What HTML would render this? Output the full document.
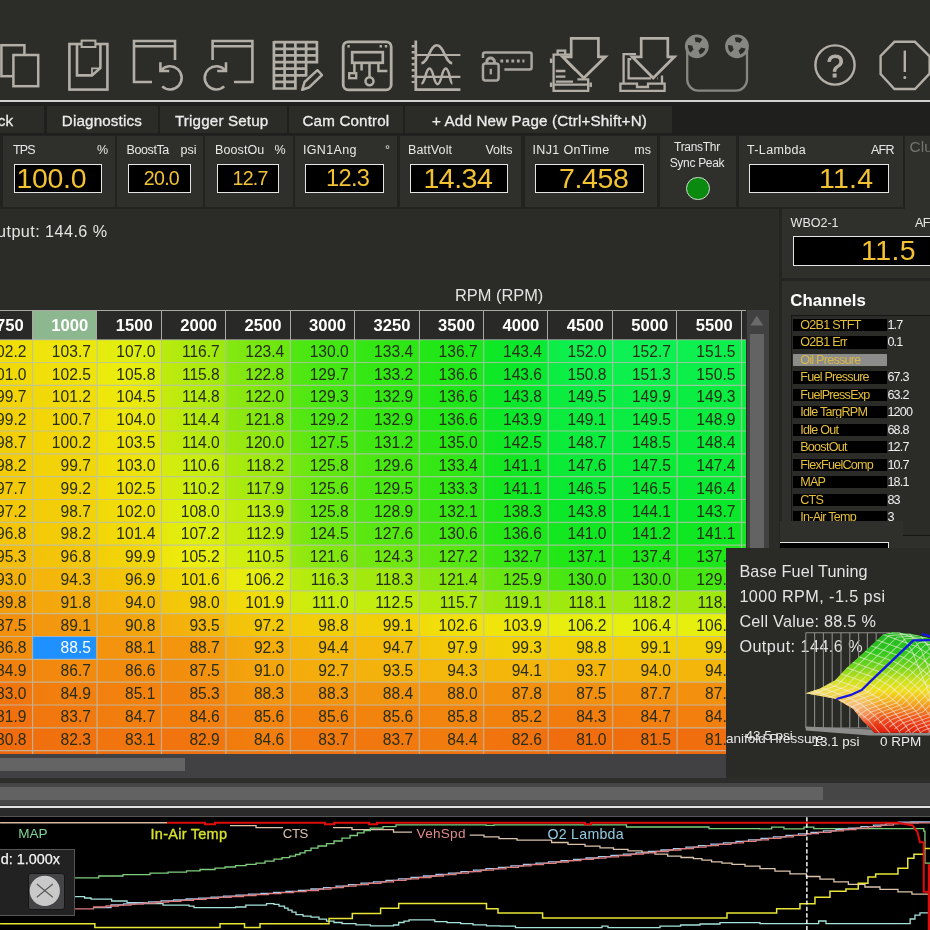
<!DOCTYPE html><html><head><meta charset="utf-8"><title>ECU Tuning</title><style>

html,body{margin:0;padding:0;background:#2b2b27;}
body{width:930px;height:930px;overflow:hidden;position:relative;font-family:"Liberation Sans", sans-serif;color:#e6e6e6;}
#root{position:absolute;left:0;top:0;width:930px;height:930px;overflow:hidden;background:#2b2b27;filter:blur(.4px);}
#root div,#root svg,#root span{position:absolute;box-sizing:border-box;white-space:nowrap;}
.tab{background:#2b2b27;font-size:15.2px;line-height:27px;color:#ececec;letter-spacing:.15px;-webkit-text-stroke:.3px #ececec;}
.gp{background:#2f2f2b;}
.gl{font-size:12.5px;color:#e8e8e8;line-height:14px;}
.gb{background:#000;border:1.5px solid #e4e4e4;}
.gv{color:#f2c233;text-align:right;}
.th{background:#292927;color:#fff;font-weight:bold;font-size:16.6px;text-align:right;padding-right:9.6px;border-left:1.5px solid #a9a9a3;line-height:30.4px;}
.td{color:#272d16;font-size:15.6px;text-align:right;padding-right:6.4px;line-height:24.6px;}
.cl{background:#000;color:#e6bf3c;font-size:12.6px;line-height:12px;letter-spacing:-.75px;padding-left:7px;overflow:hidden;}
.cv{color:#f0f0f0;font-size:12.6px;line-height:12px;letter-spacing:-.8px;}
.tt{font-size:16.2px;color:#e4e4e4;line-height:20px;}
.lg{font-size:13.6px;line-height:14px;}

</style></head><body><div id="root">
<div style="left:0.0px;top:0.0px;width:930.0px;height:100.2px;background:#2c2c28;"></div>
<div style="left:0.0px;top:100.3px;width:930.0px;height:1.9px;background:#d2d2d2;"></div>
<div style="left:0.0px;top:102.4px;width:930.0px;height:33.0px;background:#1f1f1d;"></div>
<div class="tab" style="left:-10.0px;top:105.8px;width:53.9px;height:27.4px;overflow:hidden;"><span style="right:30.6px;top:1.4px;">Knock</span></div>
<div class="tab" style="left:46.5px;top:105.8px;width:111.5px;height:27.4px;padding-left:15.3px;padding-top:1.4px;">Diagnostics</div>
<div class="tab" style="left:160.0px;top:105.8px;width:126.5px;height:27.4px;padding-left:15px;padding-top:1.4px;">Trigger Setup</div>
<div class="tab" style="left:288.5px;top:105.8px;width:114.1px;height:27.4px;padding-left:14px;padding-top:1.4px;">Cam Control</div>
<div class="tab" style="left:405.0px;top:105.8px;width:267.0px;height:27.4px;padding-left:27px;padding-top:1.4px;">+ Add New Page (Ctrl+Shift+N)</div>
<div style="left:0.0px;top:135.4px;width:930.0px;height:74.0px;background:#222220;"></div>
<div class="gp" style="left:2.6px;top:136.4px;width:112.4px;height:70.4px;"></div>
<div class="gl" style="left:13.0px;top:143.3px;width:90.0px;height:14.0px;letter-spacing:-0.9px;">TPS</div>
<div class="gl" style="left:48.0px;top:143.3px;width:60.0px;height:14.0px;text-align:right;letter-spacing:0px;">%</div>
<div class="gb" style="left:14.2px;top:163.6px;width:87.4px;height:29.6px;"><div class="gv" style="left:0;top:0;right:14.3px;bottom:0;font-size:28.5px;letter-spacing:-0.3px;line-height:26.6px;">100.0</div></div>
<div class="gp" style="left:117.4px;top:136.4px;width:85.6px;height:70.4px;"></div>
<div class="gl" style="left:126.5px;top:143.3px;width:90.0px;height:14.0px;letter-spacing:-0.4px;width:43.6px;overflow:hidden;">BoostTa</div>
<div class="gl" style="left:136.5px;top:143.3px;width:60.0px;height:14.0px;text-align:right;letter-spacing:0px;">psi</div>
<div class="gb" style="left:128.0px;top:163.6px;width:63.2px;height:29.6px;"><div class="gv" style="left:0;top:0;right:11.2px;bottom:0;font-size:19.6px;letter-spacing:-0.75px;line-height:26.6px;">20.0</div></div>
<div class="gp" style="left:205.0px;top:136.4px;width:88.0px;height:70.4px;"></div>
<div class="gl" style="left:215.0px;top:143.3px;width:90.0px;height:14.0px;letter-spacing:0.1px;">BoostOu</div>
<div class="gl" style="left:225.5px;top:143.3px;width:60.0px;height:14.0px;text-align:right;letter-spacing:0px;">%</div>
<div class="gb" style="left:216.8px;top:163.6px;width:62.1px;height:29.6px;"><div class="gv" style="left:0;top:0;right:10.2px;bottom:0;font-size:19.6px;letter-spacing:-0.75px;line-height:26.6px;">12.7</div></div>
<div class="gp" style="left:295.0px;top:136.4px;width:102.4px;height:70.4px;"></div>
<div class="gl" style="left:303.0px;top:143.3px;width:90.0px;height:14.0px;letter-spacing:0.33px;">IGN1Ang</div>
<div class="gl" style="left:330.0px;top:143.3px;width:60.0px;height:14.0px;text-align:right;letter-spacing:0px;">°</div>
<div class="gb" style="left:305.3px;top:163.6px;width:78.6px;height:29.6px;"><div class="gv" style="left:0;top:0;right:13.7px;bottom:0;font-size:23.6px;letter-spacing:-0.7px;line-height:26.6px;">12.3</div></div>
<div class="gp" style="left:399.6px;top:136.4px;width:121.9px;height:70.4px;"></div>
<div class="gl" style="left:408.0px;top:143.3px;width:90.0px;height:14.0px;letter-spacing:0.14px;">BattVolt</div>
<div class="gl" style="left:452.5px;top:143.3px;width:60.0px;height:14.0px;text-align:right;letter-spacing:0px;">Volts</div>
<div class="gb" style="left:409.6px;top:163.6px;width:98.6px;height:29.6px;"><div class="gv" style="left:0;top:0;right:14.9px;bottom:0;font-size:28.5px;letter-spacing:-0.5px;line-height:26.6px;">14.34</div></div>
<div class="gp" style="left:524.6px;top:136.4px;width:132.6px;height:70.4px;"></div>
<div class="gl" style="left:532.5px;top:143.3px;width:90.0px;height:14.0px;letter-spacing:0.35px;">INJ1 OnTime</div>
<div class="gl" style="left:591.0px;top:143.3px;width:60.0px;height:14.0px;text-align:right;letter-spacing:0px;">ms</div>
<div class="gb" style="left:534.7px;top:163.6px;width:108.9px;height:29.6px;"><div class="gv" style="left:0;top:0;right:14.2px;bottom:0;font-size:28.5px;letter-spacing:-0.4px;line-height:26.6px;">7.458</div></div>
<div class="gp" style="left:660.0px;top:136.4px;width:76.0px;height:70.4px;"></div>
<div class="gl" style="left:659.0px;top:140.3px;width:76.0px;height:14.0px;text-align:center;font-size:12px;letter-spacing:-.3px;">TransThr</div>
<div class="gl" style="left:659.0px;top:156.2px;width:76.0px;height:14.0px;text-align:center;font-size:12px;letter-spacing:-.3px;">Sync Peak</div>
<div style="left:686.2px;top:176.6px;width:23.6px;height:23.6px;border-radius:50%;background:#0b8a10;border:1.9px solid #d2dcd2;"></div>
<div class="gp" style="left:739.4px;top:136.4px;width:164.0px;height:70.4px;"></div>
<div class="gl" style="left:747.0px;top:143.3px;width:90.0px;height:14.0px;letter-spacing:0.36px;">T-Lambda</div>
<div class="gl" style="left:834.5px;top:143.3px;width:59.2px;height:14.0px;text-align:right;letter-spacing:-0.8px;">AFR</div>
<div class="gb" style="left:749.0px;top:163.6px;width:140.2px;height:29.6px;"><div class="gv" style="left:0;top:0;right:14.7px;bottom:0;font-size:28.5px;letter-spacing:0.3px;line-height:26.6px;">11.4</div></div>
<div style="left:905.4px;top:136.4px;width:30.0px;height:77.6px;background:#2f2f2b;"></div>
<div style="left:909.5px;top:137.4px;width:30.0px;height:20.0px;font-size:15.5px;color:#74746f;line-height:20px;">Clutch</div>
<div style="left:0.0px;top:209.0px;width:780.0px;height:110.0px;background:#2b2b27;"></div>
<div style="left:-16.0px;top:221.3px;width:200.0px;height:20.0px;font-size:16.2px;color:#e4e4e4;line-height:20px;letter-spacing:.44px;">Output: 144.6 %</div>
<div style="left:455.0px;top:285.0px;width:100.0px;height:20.0px;font-size:16.4px;color:#e4e4e4;line-height:20px;">RPM (RPM)</div>
<div style="left:779.2px;top:209.0px;width:151.0px;height:350.0px;background:#242422;"></div>
<div style="left:781.6px;top:209.0px;width:149.0px;height:68.8px;background:#2f2f2b;"></div>
<div class="gl" style="left:790.6px;top:216.2px;width:80.0px;height:14.0px;">WBO2-1</div>
<div class="gl" style="left:915.0px;top:216.2px;width:40.0px;height:14.0px;letter-spacing:-.6px;">AFR</div>
<div class="gb" style="left:792.7px;top:236.0px;width:150.0px;height:29.8px;"><div class="gv" style="left:0;top:0;width:122.4px;bottom:0;font-size:28.5px;letter-spacing:.4px;line-height:26.8px;">11.5</div></div>
<div style="left:781.6px;top:280.6px;width:149.0px;height:280.0px;background:#2f2f2b;"></div>
<div style="left:790.3px;top:290.7px;width:100.0px;height:20.0px;font-size:16.8px;font-weight:bold;color:#fff;line-height:20px;">Channels</div>
<div style="left:790.6px;top:315.3px;width:145.0px;height:221.0px;border:1.2px solid #161614;background:#2b2b28;"></div>
<div class="cl" style="left:793.2px;top:319.0px;width:94.0px;height:12.2px;">O2B1 STFT</div>
<div class="cv" style="left:887.4px;top:319.0px;width:40.0px;height:12.2px;">1.7</div>
<div class="cl" style="left:793.2px;top:336.4px;width:94.0px;height:12.2px;">O2B1 Err</div>
<div class="cv" style="left:887.4px;top:336.4px;width:40.0px;height:12.2px;">0.1</div>
<div class="cl" style="left:793.2px;top:353.9px;width:94.0px;height:12.2px;background:#8c8c8a;color:#d8b848;">Oil Pressure</div>
<div class="cl" style="left:793.2px;top:371.4px;width:94.0px;height:12.2px;">Fuel Pressure</div>
<div class="cv" style="left:887.4px;top:371.4px;width:40.0px;height:12.2px;">67.3</div>
<div class="cl" style="left:793.2px;top:388.8px;width:94.0px;height:12.2px;">FuelPressExp</div>
<div class="cv" style="left:887.4px;top:388.8px;width:40.0px;height:12.2px;">63.2</div>
<div class="cl" style="left:793.2px;top:406.2px;width:94.0px;height:12.2px;">Idle TargRPM</div>
<div class="cv" style="left:887.4px;top:406.2px;width:40.0px;height:12.2px;">1200</div>
<div class="cl" style="left:793.2px;top:423.7px;width:94.0px;height:12.2px;">Idle Out</div>
<div class="cv" style="left:887.4px;top:423.7px;width:40.0px;height:12.2px;">68.8</div>
<div class="cl" style="left:793.2px;top:441.1px;width:94.0px;height:12.2px;">BoostOut</div>
<div class="cv" style="left:887.4px;top:441.1px;width:40.0px;height:12.2px;">12.7</div>
<div class="cl" style="left:793.2px;top:458.6px;width:94.0px;height:12.2px;">FlexFuelComp</div>
<div class="cv" style="left:887.4px;top:458.6px;width:40.0px;height:12.2px;">10.7</div>
<div class="cl" style="left:793.2px;top:476.0px;width:94.0px;height:12.2px;">MAP</div>
<div class="cv" style="left:887.4px;top:476.0px;width:40.0px;height:12.2px;">18.1</div>
<div class="cl" style="left:793.2px;top:493.5px;width:94.0px;height:12.2px;">CTS</div>
<div class="cv" style="left:887.4px;top:493.5px;width:40.0px;height:12.2px;">83</div>
<div class="cl" style="left:793.2px;top:510.9px;width:94.0px;height:12.2px;">In-Air Temp</div>
<div class="cv" style="left:887.4px;top:510.9px;width:40.0px;height:12.2px;">3</div>
<div style="left:0;top:310.0px;width:745.8px;height:443.8px;overflow:hidden;background:#2a2a28;">
<div class="th" style="left:-32.60px;top:0;width:65.95px;height:29.7px;border-top:1.5px solid #a9a9a3;">750</div>
<div class="th" style="left:31.85px;top:0;width:65.95px;height:29.7px;border-top:1.5px solid #a9a9a3;background:#8db88f;">1000</div>
<div class="th" style="left:96.30px;top:0;width:65.95px;height:29.7px;border-top:1.5px solid #a9a9a3;">1500</div>
<div class="th" style="left:160.75px;top:0;width:65.95px;height:29.7px;border-top:1.5px solid #a9a9a3;">2000</div>
<div class="th" style="left:225.20px;top:0;width:65.95px;height:29.7px;border-top:1.5px solid #a9a9a3;">2500</div>
<div class="th" style="left:289.65px;top:0;width:65.95px;height:29.7px;border-top:1.5px solid #a9a9a3;">3000</div>
<div class="th" style="left:354.10px;top:0;width:65.95px;height:29.7px;border-top:1.5px solid #a9a9a3;">3250</div>
<div class="th" style="left:418.55px;top:0;width:65.95px;height:29.7px;border-top:1.5px solid #a9a9a3;">3500</div>
<div class="th" style="left:483.00px;top:0;width:65.95px;height:29.7px;border-top:1.5px solid #a9a9a3;">4000</div>
<div class="th" style="left:547.45px;top:0;width:65.95px;height:29.7px;border-top:1.5px solid #a9a9a3;">4500</div>
<div class="th" style="left:611.90px;top:0;width:65.95px;height:29.7px;border-top:1.5px solid #a9a9a3;">5000</div>
<div class="th" style="left:676.35px;top:0;width:65.95px;height:29.7px;border-top:1.5px solid #a9a9a3;">5500</div>
<div class="th" style="left:740.80px;top:0;width:65.95px;height:29.7px;border-top:1.5px solid #a9a9a3;">6000</div>
<div class="td" style="left:-32.60px;top:29.70px;width:65.45px;height:23.33px;background:linear-gradient(90deg,rgb(241,222,9) 0%,rgb(241,222,9) 50%,rgb(240,224,10) 100%);">102.2</div>
<div class="td" style="left:31.85px;top:29.70px;width:65.45px;height:23.33px;background:linear-gradient(90deg,rgb(239,227,11) 0%,rgb(239,229,11) 50%,rgb(235,232,12) 100%);">103.7</div>
<div class="td" style="left:96.30px;top:29.70px;width:65.45px;height:23.33px;background:linear-gradient(90deg,rgb(229,236,13) 0%,rgb(225,239,14) 50%,rgb(209,238,14) 100%);">107.0</div>
<div class="td" style="left:160.75px;top:29.70px;width:65.45px;height:23.33px;background:linear-gradient(90deg,rgb(187,235,14) 0%,rgb(170,234,14) 50%,rgb(155,233,15) 100%);">116.7</div>
<div class="td" style="left:225.20px;top:29.70px;width:65.45px;height:23.33px;background:linear-gradient(90deg,rgb(134,232,16) 0%,rgb(119,231,16) 50%,rgb(104,231,17) 100%);">123.4</div>
<div class="td" style="left:289.65px;top:29.70px;width:65.45px;height:23.33px;background:linear-gradient(90deg,rgb(83,231,18) 0%,rgb(68,231,19) 50%,rgb(62,231,19) 100%);">130.0</div>
<div class="td" style="left:354.10px;top:29.70px;width:65.45px;height:23.33px;background:linear-gradient(90deg,rgb(54,231,20) 0%,rgb(48,231,20) 50%,rgb(43,231,21) 100%);">133.4</div>
<div class="td" style="left:418.55px;top:29.70px;width:65.45px;height:23.33px;background:linear-gradient(90deg,rgb(36,231,22) 0%,rgb(31,231,23) 50%,rgb(25,231,28) 100%);">136.7</div>
<div class="td" style="left:483.00px;top:29.70px;width:65.45px;height:23.33px;background:linear-gradient(90deg,rgb(17,232,36) 0%,rgb(10,232,42) 50%,rgb(11,234,53) 100%);">143.4</div>
<div class="td" style="left:547.45px;top:29.70px;width:65.45px;height:23.33px;background:linear-gradient(90deg,rgb(12,237,69) 0%,rgb(13,240,80) 50%,rgb(13,240,82) 100%);">152.0</div>
<div class="td" style="left:611.90px;top:29.70px;width:65.45px;height:23.33px;background:linear-gradient(90deg,rgb(14,240,83) 0%,rgb(14,241,84) 50%,rgb(13,240,82) 100%);">152.7</div>
<div class="td" style="left:676.35px;top:29.70px;width:65.45px;height:23.33px;background:linear-gradient(90deg,rgb(13,240,80) 0%,rgb(13,239,78) 50%,rgb(13,239,77) 100%);">151.5</div>
<div class="td" style="left:740.80px;top:29.70px;width:65.45px;height:23.33px;background:linear-gradient(90deg,rgb(12,239,75) 0%,rgb(12,238,74) 50%,rgb(12,238,74) 100%);">150.9</div>
<div class="td" style="left:-32.60px;top:52.53px;width:65.45px;height:23.33px;background:linear-gradient(90deg,rgb(241,217,9) 0%,rgb(241,217,9) 50%,rgb(241,219,9) 100%);">101.0</div>
<div class="td" style="left:31.85px;top:52.53px;width:65.45px;height:23.33px;background:linear-gradient(90deg,rgb(241,222,9) 0%,rgb(240,224,10) 50%,rgb(238,228,11) 100%);">102.5</div>
<div class="td" style="left:96.30px;top:52.53px;width:65.45px;height:23.33px;background:linear-gradient(90deg,rgb(236,234,13) 0%,rgb(234,238,14) 50%,rgb(216,237,14) 100%);">105.8</div>
<div class="td" style="left:160.75px;top:52.53px;width:65.45px;height:23.33px;background:linear-gradient(90deg,rgb(193,235,14) 0%,rgb(176,234,14) 50%,rgb(160,233,15) 100%);">115.8</div>
<div class="td" style="left:225.20px;top:52.53px;width:65.45px;height:23.33px;background:linear-gradient(90deg,rgb(139,232,16) 0%,rgb(124,231,16) 50%,rgb(108,231,17) 100%);">122.8</div>
<div class="td" style="left:289.65px;top:52.53px;width:65.45px;height:23.33px;background:linear-gradient(90deg,rgb(86,231,18) 0%,rgb(70,231,19) 50%,rgb(64,231,19) 100%);">129.7</div>
<div class="td" style="left:354.10px;top:52.53px;width:65.45px;height:23.33px;background:linear-gradient(90deg,rgb(55,231,20) 0%,rgb(49,231,20) 50%,rgb(44,231,21) 100%);">133.2</div>
<div class="td" style="left:418.55px;top:52.53px;width:65.45px;height:23.33px;background:linear-gradient(90deg,rgb(37,231,22) 0%,rgb(32,231,23) 50%,rgb(25,231,29) 100%);">136.6</div>
<div class="td" style="left:483.00px;top:52.53px;width:65.45px;height:23.33px;background:linear-gradient(90deg,rgb(17,232,36) 0%,rgb(10,232,42) 50%,rgb(11,234,52) 100%);">143.6</div>
<div class="td" style="left:547.45px;top:52.53px;width:65.45px;height:23.33px;background:linear-gradient(90deg,rgb(12,236,64) 0%,rgb(12,238,74) 50%,rgb(12,239,75) 100%);">150.8</div>
<div class="td" style="left:611.90px;top:52.53px;width:65.45px;height:23.33px;background:linear-gradient(90deg,rgb(13,239,76) 0%,rgb(13,239,76) 50%,rgb(12,239,75) 100%);">151.3</div>
<div class="td" style="left:676.35px;top:52.53px;width:65.45px;height:23.33px;background:linear-gradient(90deg,rgb(12,238,73) 0%,rgb(12,238,72) 50%,rgb(12,238,71) 100%);">150.5</div>
<div class="td" style="left:740.80px;top:52.53px;width:65.45px;height:23.33px;background:linear-gradient(90deg,rgb(12,238,70) 0%,rgb(12,237,69) 50%,rgb(12,237,69) 100%);">150.0</div>
<div class="td" style="left:-32.60px;top:75.36px;width:65.45px;height:23.33px;background:linear-gradient(90deg,rgb(242,211,8) 0%,rgb(242,211,8) 50%,rgb(242,213,8) 100%);">99.7</div>
<div class="td" style="left:31.85px;top:75.36px;width:65.45px;height:23.33px;background:linear-gradient(90deg,rgb(241,216,9) 0%,rgb(241,218,9) 50%,rgb(240,222,10) 100%);">101.2</div>
<div class="td" style="left:96.30px;top:75.36px;width:65.45px;height:23.33px;background:linear-gradient(90deg,rgb(239,229,11) 0%,rgb(238,233,12) 50%,rgb(221,234,13) 100%);">104.5</div>
<div class="td" style="left:160.75px;top:75.36px;width:65.45px;height:23.33px;background:linear-gradient(90deg,rgb(199,234,14) 0%,rgb(182,235,14) 50%,rgb(166,234,15) 100%);">114.8</div>
<div class="td" style="left:225.20px;top:75.36px;width:65.45px;height:23.33px;background:linear-gradient(90deg,rgb(146,232,15) 0%,rgb(130,231,16) 50%,rgb(113,231,17) 100%);">122.0</div>
<div class="td" style="left:289.65px;top:75.36px;width:65.45px;height:23.33px;background:linear-gradient(90deg,rgb(90,231,18) 0%,rgb(73,231,19) 50%,rgb(66,231,19) 100%);">129.3</div>
<div class="td" style="left:354.10px;top:75.36px;width:65.45px;height:23.33px;background:linear-gradient(90deg,rgb(57,231,19) 0%,rgb(51,231,20) 50%,rgb(45,231,21) 100%);">132.9</div>
<div class="td" style="left:418.55px;top:75.36px;width:65.45px;height:23.33px;background:linear-gradient(90deg,rgb(38,231,22) 0%,rgb(32,231,23) 50%,rgb(25,231,29) 100%);">136.6</div>
<div class="td" style="left:483.00px;top:75.36px;width:65.45px;height:23.33px;background:linear-gradient(90deg,rgb(17,232,37) 0%,rgb(10,232,43) 50%,rgb(10,234,50) 100%);">143.8</div>
<div class="td" style="left:547.45px;top:75.36px;width:65.45px;height:23.33px;background:linear-gradient(90deg,rgb(11,235,59) 0%,rgb(11,237,66) 50%,rgb(11,237,67) 100%);">149.5</div>
<div class="td" style="left:611.90px;top:75.36px;width:65.45px;height:23.33px;background:linear-gradient(90deg,rgb(11,237,68) 0%,rgb(12,237,69) 50%,rgb(11,237,68) 100%);">149.9</div>
<div class="td" style="left:676.35px;top:75.36px;width:65.45px;height:23.33px;background:linear-gradient(90deg,rgb(11,237,66) 0%,rgb(11,237,65) 50%,rgb(11,236,65) 100%);">149.3</div>
<div class="td" style="left:740.80px;top:75.36px;width:65.45px;height:23.33px;background:linear-gradient(90deg,rgb(11,236,64) 0%,rgb(11,236,64) 50%,rgb(11,236,64) 100%);">149.0</div>
<div class="td" style="left:-32.60px;top:98.19px;width:65.45px;height:23.33px;background:linear-gradient(90deg,rgb(242,208,9) 0%,rgb(242,208,9) 50%,rgb(242,210,9) 100%);">99.2</div>
<div class="td" style="left:31.85px;top:98.19px;width:65.45px;height:23.33px;background:linear-gradient(90deg,rgb(242,213,8) 0%,rgb(242,215,8) 50%,rgb(241,220,9) 100%);">100.7</div>
<div class="td" style="left:96.30px;top:98.19px;width:65.45px;height:23.33px;background:linear-gradient(90deg,rgb(239,226,11) 0%,rgb(238,231,12) 50%,rgb(222,232,12) 100%);">104.0</div>
<div class="td" style="left:160.75px;top:98.19px;width:65.45px;height:23.33px;background:linear-gradient(90deg,rgb(201,234,13) 0%,rgb(184,235,14) 50%,rgb(169,234,15) 100%);">114.4</div>
<div class="td" style="left:225.20px;top:98.19px;width:65.45px;height:23.33px;background:linear-gradient(90deg,rgb(147,232,15) 0%,rgb(132,231,16) 50%,rgb(114,231,17) 100%);">121.8</div>
<div class="td" style="left:289.65px;top:98.19px;width:65.45px;height:23.33px;background:linear-gradient(90deg,rgb(91,231,18) 0%,rgb(74,231,19) 50%,rgb(67,231,19) 100%);">129.2</div>
<div class="td" style="left:354.10px;top:98.19px;width:65.45px;height:23.33px;background:linear-gradient(90deg,rgb(58,231,19) 0%,rgb(51,231,20) 50%,rgb(45,231,21) 100%);">132.9</div>
<div class="td" style="left:418.55px;top:98.19px;width:65.45px;height:23.33px;background:linear-gradient(90deg,rgb(38,231,22) 0%,rgb(32,231,23) 50%,rgb(25,231,29) 100%);">136.6</div>
<div class="td" style="left:483.00px;top:98.19px;width:65.45px;height:23.33px;background:linear-gradient(90deg,rgb(17,232,37) 0%,rgb(10,232,43) 50%,rgb(10,233,50) 100%);">143.9</div>
<div class="td" style="left:547.45px;top:98.19px;width:65.45px;height:23.33px;background:linear-gradient(90deg,rgb(11,235,58) 0%,rgb(11,236,64) 50%,rgb(11,236,65) 100%);">149.1</div>
<div class="td" style="left:611.90px;top:98.19px;width:65.45px;height:23.33px;background:linear-gradient(90deg,rgb(11,237,66) 0%,rgb(11,237,66) 50%,rgb(11,237,65) 100%);">149.5</div>
<div class="td" style="left:676.35px;top:98.19px;width:65.45px;height:23.33px;background:linear-gradient(90deg,rgb(11,236,64) 0%,rgb(11,236,63) 50%,rgb(11,236,63) 100%);">148.9</div>
<div class="td" style="left:740.80px;top:98.19px;width:65.45px;height:23.33px;background:linear-gradient(90deg,rgb(11,236,62) 0%,rgb(10,236,61) 50%,rgb(10,236,61) 100%);">148.6</div>
<div class="td" style="left:-32.60px;top:121.02px;width:65.45px;height:23.33px;background:linear-gradient(90deg,rgb(242,206,9) 0%,rgb(242,206,9) 50%,rgb(242,208,9) 100%);">98.7</div>
<div class="td" style="left:31.85px;top:121.02px;width:65.45px;height:23.33px;background:linear-gradient(90deg,rgb(242,211,8) 0%,rgb(242,213,8) 50%,rgb(241,218,9) 100%);">100.2</div>
<div class="td" style="left:96.30px;top:121.02px;width:65.45px;height:23.33px;background:linear-gradient(90deg,rgb(240,224,10) 0%,rgb(239,228,11) 50%,rgb(223,231,12) 100%);">103.5</div>
<div class="td" style="left:160.75px;top:121.02px;width:65.45px;height:23.33px;background:linear-gradient(90deg,rgb(202,233,13) 0%,rgb(186,235,14) 50%,rgb(174,234,14) 100%);">114.0</div>
<div class="td" style="left:225.20px;top:121.02px;width:65.45px;height:23.33px;background:linear-gradient(90deg,rgb(158,233,15) 0%,rgb(146,232,15) 50%,rgb(128,232,16) 100%);">120.0</div>
<div class="td" style="left:289.65px;top:121.02px;width:65.45px;height:23.33px;background:linear-gradient(90deg,rgb(105,231,17) 0%,rgb(87,231,18) 50%,rgb(79,231,18) 100%);">127.5</div>
<div class="td" style="left:354.10px;top:121.02px;width:65.45px;height:23.33px;background:linear-gradient(90deg,rgb(69,231,19) 0%,rgb(61,231,19) 50%,rgb(54,231,20) 100%);">131.2</div>
<div class="td" style="left:418.55px;top:121.02px;width:65.45px;height:23.33px;background:linear-gradient(90deg,rgb(46,231,21) 0%,rgb(40,231,21) 50%,rgb(31,231,26) 100%);">135.0</div>
<div class="td" style="left:483.00px;top:121.02px;width:65.45px;height:23.33px;background:linear-gradient(90deg,rgb(21,232,33) 0%,rgb(12,232,39) 50%,rgb(12,233,46) 100%);">142.5</div>
<div class="td" style="left:547.45px;top:121.02px;width:65.45px;height:23.33px;background:linear-gradient(90deg,rgb(11,235,55) 0%,rgb(11,236,62) 50%,rgb(11,236,62) 100%);">148.7</div>
<div class="td" style="left:611.90px;top:121.02px;width:65.45px;height:23.33px;background:linear-gradient(90deg,rgb(10,236,61) 0%,rgb(10,236,61) 50%,rgb(10,236,61) 100%);">148.5</div>
<div class="td" style="left:676.35px;top:121.02px;width:65.45px;height:23.33px;background:linear-gradient(90deg,rgb(10,236,60) 0%,rgb(10,235,60) 50%,rgb(10,235,60) 100%);">148.4</div>
<div class="td" style="left:740.80px;top:121.02px;width:65.45px;height:23.33px;background:linear-gradient(90deg,rgb(10,235,59) 0%,rgb(10,235,59) 50%,rgb(10,235,59) 100%);">148.2</div>
<div class="td" style="left:-32.60px;top:143.85px;width:65.45px;height:23.33px;background:linear-gradient(90deg,rgb(243,204,9) 0%,rgb(243,204,9) 50%,rgb(242,206,9) 100%);">98.2</div>
<div class="td" style="left:31.85px;top:143.85px;width:65.45px;height:23.33px;background:linear-gradient(90deg,rgb(242,209,8) 0%,rgb(242,211,8) 50%,rgb(241,215,9) 100%);">99.7</div>
<div class="td" style="left:96.30px;top:143.85px;width:65.45px;height:23.33px;background:linear-gradient(90deg,rgb(241,221,9) 0%,rgb(240,226,10) 50%,rgb(229,230,11) 100%);">103.0</div>
<div class="td" style="left:160.75px;top:143.85px;width:65.45px;height:23.33px;background:linear-gradient(90deg,rgb(214,235,13) 0%,rgb(202,238,14) 50%,rgb(190,237,14) 100%);">110.6</div>
<div class="td" style="left:225.20px;top:143.85px;width:65.45px;height:23.33px;background:linear-gradient(90deg,rgb(173,235,14) 0%,rgb(160,233,14) 50%,rgb(142,232,15) 100%);">118.2</div>
<div class="td" style="left:289.65px;top:143.85px;width:65.45px;height:23.33px;background:linear-gradient(90deg,rgb(118,232,16) 0%,rgb(100,231,17) 50%,rgb(91,231,18) 100%);">125.8</div>
<div class="td" style="left:354.10px;top:143.85px;width:65.45px;height:23.33px;background:linear-gradient(90deg,rgb(80,231,18) 0%,rgb(71,231,19) 50%,rgb(64,231,19) 100%);">129.6</div>
<div class="td" style="left:418.55px;top:143.85px;width:65.45px;height:23.33px;background:linear-gradient(90deg,rgb(55,231,20) 0%,rgb(48,231,20) 50%,rgb(38,231,24) 100%);">133.4</div>
<div class="td" style="left:483.00px;top:143.85px;width:65.45px;height:23.33px;background:linear-gradient(90deg,rgb(25,231,30) 0%,rgb(15,231,34) 50%,rgb(14,232,41) 100%);">141.1</div>
<div class="td" style="left:547.45px;top:143.85px;width:65.45px;height:23.33px;background:linear-gradient(90deg,rgb(12,234,50) 0%,rgb(10,235,57) 50%,rgb(10,235,56) 100%);">147.6</div>
<div class="td" style="left:611.90px;top:143.85px;width:65.45px;height:23.33px;background:linear-gradient(90deg,rgb(10,235,56) 0%,rgb(10,235,56) 50%,rgb(10,235,56) 100%);">147.5</div>
<div class="td" style="left:676.35px;top:143.85px;width:65.45px;height:23.33px;background:linear-gradient(90deg,rgb(10,235,56) 0%,rgb(10,235,56) 50%,rgb(10,235,56) 100%);">147.4</div>
<div class="td" style="left:740.80px;top:143.85px;width:65.45px;height:23.33px;background:linear-gradient(90deg,rgb(10,235,55) 0%,rgb(10,234,55) 50%,rgb(10,234,55) 100%);">147.2</div>
<div class="td" style="left:-32.60px;top:166.68px;width:65.45px;height:23.33px;background:linear-gradient(90deg,rgb(243,201,10) 0%,rgb(243,201,10) 50%,rgb(243,203,9) 100%);">97.7</div>
<div class="td" style="left:31.85px;top:166.68px;width:65.45px;height:23.33px;background:linear-gradient(90deg,rgb(242,206,9) 0%,rgb(242,208,9) 50%,rgb(242,213,9) 100%);">99.2</div>
<div class="td" style="left:96.30px;top:166.68px;width:65.45px;height:23.33px;background:linear-gradient(90deg,rgb(241,219,9) 0%,rgb(240,224,10) 50%,rgb(230,228,11) 100%);">102.5</div>
<div class="td" style="left:160.75px;top:166.68px;width:65.45px;height:23.33px;background:linear-gradient(90deg,rgb(215,234,13) 0%,rgb(205,239,14) 50%,rgb(192,237,14) 100%);">110.2</div>
<div class="td" style="left:225.20px;top:166.68px;width:65.45px;height:23.33px;background:linear-gradient(90deg,rgb(175,235,14) 0%,rgb(163,233,14) 50%,rgb(144,232,15) 100%);">117.9</div>
<div class="td" style="left:289.65px;top:166.68px;width:65.45px;height:23.33px;background:linear-gradient(90deg,rgb(120,232,16) 0%,rgb(101,231,17) 50%,rgb(92,231,17) 100%);">125.6</div>
<div class="td" style="left:354.10px;top:166.68px;width:65.45px;height:23.33px;background:linear-gradient(90deg,rgb(81,231,18) 0%,rgb(72,231,19) 50%,rgb(65,231,19) 100%);">129.5</div>
<div class="td" style="left:418.55px;top:166.68px;width:65.45px;height:23.33px;background:linear-gradient(90deg,rgb(55,231,20) 0%,rgb(48,231,20) 50%,rgb(38,231,24) 100%);">133.3</div>
<div class="td" style="left:483.00px;top:166.68px;width:65.45px;height:23.33px;background:linear-gradient(90deg,rgb(25,231,30) 0%,rgb(15,231,34) 50%,rgb(14,232,39) 100%);">141.1</div>
<div class="td" style="left:547.45px;top:166.68px;width:65.45px;height:23.33px;background:linear-gradient(90deg,rgb(12,233,47) 0%,rgb(10,234,53) 50%,rgb(10,234,53) 100%);">146.5</div>
<div class="td" style="left:611.90px;top:166.68px;width:65.45px;height:23.33px;background:linear-gradient(90deg,rgb(10,234,53) 0%,rgb(10,234,53) 50%,rgb(10,234,53) 100%);">146.5</div>
<div class="td" style="left:676.35px;top:166.68px;width:65.45px;height:23.33px;background:linear-gradient(90deg,rgb(10,234,52) 0%,rgb(10,234,52) 50%,rgb(10,234,52) 100%);">146.4</div>
<div class="td" style="left:740.80px;top:166.68px;width:65.45px;height:23.33px;background:linear-gradient(90deg,rgb(10,234,52) 0%,rgb(10,234,52) 50%,rgb(10,234,52) 100%);">146.2</div>
<div class="td" style="left:-32.60px;top:189.51px;width:65.45px;height:23.33px;background:linear-gradient(90deg,rgb(243,199,10) 0%,rgb(243,199,10) 50%,rgb(243,201,10) 100%);">97.2</div>
<div class="td" style="left:31.85px;top:189.51px;width:65.45px;height:23.33px;background:linear-gradient(90deg,rgb(243,204,9) 0%,rgb(242,206,9) 50%,rgb(242,211,9) 100%);">98.7</div>
<div class="td" style="left:96.30px;top:189.51px;width:65.45px;height:23.33px;background:linear-gradient(90deg,rgb(241,217,9) 0%,rgb(241,221,9) 50%,rgb(234,227,11) 100%);">102.0</div>
<div class="td" style="left:160.75px;top:189.51px;width:65.45px;height:23.33px;background:linear-gradient(90deg,rgb(225,234,13) 0%,rgb(218,240,14) 50%,rgb(209,239,14) 100%);">108.0</div>
<div class="td" style="left:225.20px;top:189.51px;width:65.45px;height:23.33px;background:linear-gradient(90deg,rgb(196,237,14) 0%,rgb(187,236,14) 50%,rgb(161,234,15) 100%);">113.9</div>
<div class="td" style="left:289.65px;top:189.51px;width:65.45px;height:23.33px;background:linear-gradient(90deg,rgb(126,232,16) 0%,rgb(100,231,17) 50%,rgb(93,231,17) 100%);">125.8</div>
<div class="td" style="left:354.10px;top:189.51px;width:65.45px;height:23.33px;background:linear-gradient(90deg,rgb(83,231,18) 0%,rgb(76,231,18) 50%,rgb(70,231,19) 100%);">128.9</div>
<div class="td" style="left:418.55px;top:189.51px;width:65.45px;height:23.33px;background:linear-gradient(90deg,rgb(62,231,19) 0%,rgb(55,231,20) 50%,rgb(46,231,22) 100%);">132.1</div>
<div class="td" style="left:483.00px;top:189.51px;width:65.45px;height:23.33px;background:linear-gradient(90deg,rgb(34,231,24) 0%,rgb(25,231,26) 50%,rgb(20,231,31) 100%);">138.3</div>
<div class="td" style="left:547.45px;top:189.51px;width:65.45px;height:23.33px;background:linear-gradient(90deg,rgb(14,232,38) 0%,rgb(10,232,43) 50%,rgb(10,232,43) 100%);">143.8</div>
<div class="td" style="left:611.90px;top:189.51px;width:65.45px;height:23.33px;background:linear-gradient(90deg,rgb(10,232,44) 0%,rgb(10,232,44) 50%,rgb(10,232,44) 100%);">144.1</div>
<div class="td" style="left:676.35px;top:189.51px;width:65.45px;height:23.33px;background:linear-gradient(90deg,rgb(10,232,43) 0%,rgb(10,232,43) 50%,rgb(10,232,42) 100%);">143.7</div>
<div class="td" style="left:740.80px;top:189.51px;width:65.45px;height:23.33px;background:linear-gradient(90deg,rgb(10,232,42) 0%,rgb(10,232,42) 50%,rgb(10,232,42) 100%);">143.5</div>
<div class="td" style="left:-32.60px;top:212.34px;width:65.45px;height:23.33px;background:linear-gradient(90deg,rgb(243,197,10) 0%,rgb(243,197,10) 50%,rgb(243,199,10) 100%);">96.8</div>
<div class="td" style="left:31.85px;top:212.34px;width:65.45px;height:23.33px;background:linear-gradient(90deg,rgb(243,202,9) 0%,rgb(243,204,9) 50%,rgb(242,208,9) 100%);">98.2</div>
<div class="td" style="left:96.30px;top:212.34px;width:65.45px;height:23.33px;background:linear-gradient(90deg,rgb(242,214,9) 0%,rgb(241,219,9) 50%,rgb(236,225,10) 100%);">101.4</div>
<div class="td" style="left:160.75px;top:212.34px;width:65.45px;height:23.33px;background:linear-gradient(90deg,rgb(229,233,12) 0%,rgb(224,239,14) 50%,rgb(214,238,14) 100%);">107.2</div>
<div class="td" style="left:225.20px;top:212.34px;width:65.45px;height:23.33px;background:linear-gradient(90deg,rgb(201,237,14) 0%,rgb(191,236,14) 50%,rgb(167,235,15) 100%);">112.9</div>
<div class="td" style="left:289.65px;top:212.34px;width:65.45px;height:23.33px;background:linear-gradient(90deg,rgb(134,233,16) 0%,rgb(110,231,17) 50%,rgb(103,231,17) 100%);">124.5</div>
<div class="td" style="left:354.10px;top:212.34px;width:65.45px;height:23.33px;background:linear-gradient(90deg,rgb(93,231,17) 0%,rgb(86,231,18) 50%,rgb(80,231,18) 100%);">127.6</div>
<div class="td" style="left:418.55px;top:212.34px;width:65.45px;height:23.33px;background:linear-gradient(90deg,rgb(71,231,19) 0%,rgb(64,231,19) 50%,rgb(55,231,20) 100%);">130.6</div>
<div class="td" style="left:483.00px;top:212.34px;width:65.45px;height:23.33px;background:linear-gradient(90deg,rgb(42,231,22) 0%,rgb(32,231,23) 50%,rgb(27,231,26) 100%);">136.6</div>
<div class="td" style="left:547.45px;top:212.34px;width:65.45px;height:23.33px;background:linear-gradient(90deg,rgb(21,231,30) 0%,rgb(16,231,33) 50%,rgb(16,231,34) 100%);">141.0</div>
<div class="td" style="left:611.90px;top:212.34px;width:65.45px;height:23.33px;background:linear-gradient(90deg,rgb(15,231,34) 0%,rgb(15,231,34) 50%,rgb(15,231,34) 100%);">141.2</div>
<div class="td" style="left:676.35px;top:212.34px;width:65.45px;height:23.33px;background:linear-gradient(90deg,rgb(15,231,34) 0%,rgb(15,231,34) 50%,rgb(16,231,34) 100%);">141.1</div>
<div class="td" style="left:740.80px;top:212.34px;width:65.45px;height:23.33px;background:linear-gradient(90deg,rgb(16,231,34) 0%,rgb(16,231,33) 50%,rgb(16,231,33) 100%);">141.0</div>
<div class="td" style="left:-32.60px;top:235.17px;width:65.45px;height:23.33px;background:linear-gradient(90deg,rgb(243,189,11) 0%,rgb(243,189,11) 50%,rgb(243,191,11) 100%);">95.3</div>
<div class="td" style="left:31.85px;top:235.17px;width:65.45px;height:23.33px;background:linear-gradient(90deg,rgb(243,194,10) 0%,rgb(243,197,10) 50%,rgb(243,201,9) 100%);">96.8</div>
<div class="td" style="left:96.30px;top:235.17px;width:65.45px;height:23.33px;background:linear-gradient(90deg,rgb(242,207,9) 0%,rgb(242,212,8) 50%,rgb(240,219,10) 100%);">99.9</div>
<div class="td" style="left:160.75px;top:235.17px;width:65.45px;height:23.33px;background:linear-gradient(90deg,rgb(238,229,12) 0%,rgb(236,237,14) 50%,rgb(226,237,14) 100%);">105.2</div>
<div class="td" style="left:225.20px;top:235.17px;width:65.45px;height:23.33px;background:linear-gradient(90deg,rgb(213,238,14) 0%,rgb(203,238,14) 50%,rgb(182,236,15) 100%);">110.5</div>
<div class="td" style="left:289.65px;top:235.17px;width:65.45px;height:23.33px;background:linear-gradient(90deg,rgb(154,233,15) 0%,rgb(133,231,16) 50%,rgb(127,231,16) 100%);">121.6</div>
<div class="td" style="left:354.10px;top:235.17px;width:65.45px;height:23.33px;background:linear-gradient(90deg,rgb(118,231,16) 0%,rgb(112,231,17) 50%,rgb(105,231,17) 100%);">124.3</div>
<div class="td" style="left:418.55px;top:235.17px;width:65.45px;height:23.33px;background:linear-gradient(90deg,rgb(96,231,17) 0%,rgb(89,231,18) 50%,rgb(78,231,18) 100%);">127.2</div>
<div class="td" style="left:483.00px;top:235.17px;width:65.45px;height:23.33px;background:linear-gradient(90deg,rgb(63,231,19) 0%,rgb(52,231,20) 50%,rgb(45,231,21) 100%);">132.7</div>
<div class="td" style="left:547.45px;top:235.17px;width:65.45px;height:23.33px;background:linear-gradient(90deg,rgb(36,231,22) 0%,rgb(30,231,23) 50%,rgb(29,231,23) 100%);">137.1</div>
<div class="td" style="left:611.90px;top:235.17px;width:65.45px;height:23.33px;background:linear-gradient(90deg,rgb(29,231,24) 0%,rgb(28,231,24) 50%,rgb(29,231,24) 100%);">137.4</div>
<div class="td" style="left:676.35px;top:235.17px;width:65.45px;height:23.33px;background:linear-gradient(90deg,rgb(29,231,24) 0%,rgb(29,231,24) 50%,rgb(29,231,24) 100%);">137.3</div>
<div class="td" style="left:740.80px;top:235.17px;width:65.45px;height:23.33px;background:linear-gradient(90deg,rgb(29,231,24) 0%,rgb(29,231,23) 50%,rgb(29,231,23) 100%);">137.2</div>
<div class="td" style="left:-32.60px;top:258.00px;width:65.45px;height:23.33px;background:linear-gradient(90deg,rgb(244,176,12) 0%,rgb(244,176,12) 50%,rgb(244,178,12) 100%);">93.0</div>
<div class="td" style="left:31.85px;top:258.00px;width:65.45px;height:23.33px;background:linear-gradient(90deg,rgb(244,181,12) 0%,rgb(244,183,11) 50%,rgb(243,187,11) 100%);">94.3</div>
<div class="td" style="left:96.30px;top:258.00px;width:65.45px;height:23.33px;background:linear-gradient(90deg,rgb(243,193,10) 0%,rgb(243,197,10) 50%,rgb(242,204,10) 100%);">96.9</div>
<div class="td" style="left:160.75px;top:258.00px;width:65.45px;height:23.33px;background:linear-gradient(90deg,rgb(242,213,9) 0%,rgb(241,219,9) 50%,rgb(238,225,11) 100%);">101.6</div>
<div class="td" style="left:225.20px;top:258.00px;width:65.45px;height:23.33px;background:linear-gradient(90deg,rgb(234,233,13) 0%,rgb(231,239,14) 50%,rgb(213,237,14) 100%);">106.2</div>
<div class="td" style="left:289.65px;top:258.00px;width:65.45px;height:23.33px;background:linear-gradient(90deg,rgb(190,235,14) 0%,rgb(173,234,14) 50%,rgb(169,234,14) 100%);">116.3</div>
<div class="td" style="left:354.10px;top:258.00px;width:65.45px;height:23.33px;background:linear-gradient(90deg,rgb(164,233,14) 0%,rgb(160,233,14) 50%,rgb(152,232,15) 100%);">118.3</div>
<div class="td" style="left:418.55px;top:258.00px;width:65.45px;height:23.33px;background:linear-gradient(90deg,rgb(142,232,15) 0%,rgb(135,231,16) 50%,rgb(124,231,16) 100%);">121.4</div>
<div class="td" style="left:483.00px;top:258.00px;width:65.45px;height:23.33px;background:linear-gradient(90deg,rgb(110,231,17) 0%,rgb(99,231,17) 50%,rgb(90,231,18) 100%);">125.9</div>
<div class="td" style="left:547.45px;top:258.00px;width:65.45px;height:23.33px;background:linear-gradient(90deg,rgb(77,231,18) 0%,rgb(68,231,19) 50%,rgb(68,231,19) 100%);">130.0</div>
<div class="td" style="left:611.90px;top:258.00px;width:65.45px;height:23.33px;background:linear-gradient(90deg,rgb(68,231,19) 0%,rgb(68,231,19) 50%,rgb(68,231,19) 100%);">130.0</div>
<div class="td" style="left:676.35px;top:258.00px;width:65.45px;height:23.33px;background:linear-gradient(90deg,rgb(69,231,19) 0%,rgb(69,231,19) 50%,rgb(69,231,19) 100%);">129.9</div>
<div class="td" style="left:740.80px;top:258.00px;width:65.45px;height:23.33px;background:linear-gradient(90deg,rgb(69,231,19) 0%,rgb(69,231,19) 50%,rgb(69,231,19) 100%);">129.8</div>
<div class="td" style="left:-32.60px;top:280.83px;width:65.45px;height:23.33px;background:linear-gradient(90deg,rgb(243,157,14) 0%,rgb(243,157,14) 50%,rgb(243,160,13) 100%);">89.8</div>
<div class="td" style="left:31.85px;top:280.83px;width:65.45px;height:23.33px;background:linear-gradient(90deg,rgb(244,165,13) 0%,rgb(244,169,13) 50%,rgb(244,173,12) 100%);">91.8</div>
<div class="td" style="left:96.30px;top:280.83px;width:65.45px;height:23.33px;background:linear-gradient(90deg,rgb(244,178,12) 0%,rgb(244,182,12) 50%,rgb(243,188,11) 100%);">94.0</div>
<div class="td" style="left:160.75px;top:280.83px;width:65.45px;height:23.33px;background:linear-gradient(90deg,rgb(243,196,10) 0%,rgb(243,203,9) 50%,rgb(242,208,9) 100%);">98.0</div>
<div class="td" style="left:225.20px;top:280.83px;width:65.45px;height:23.33px;background:linear-gradient(90deg,rgb(241,215,9) 0%,rgb(241,221,9) 50%,rgb(229,226,11) 100%);">101.9</div>
<div class="td" style="left:289.65px;top:280.83px;width:65.45px;height:23.33px;background:linear-gradient(90deg,rgb(212,233,13) 0%,rgb(200,238,14) 50%,rgb(198,238,14) 100%);">111.0</div>
<div class="td" style="left:354.10px;top:280.83px;width:65.45px;height:23.33px;background:linear-gradient(90deg,rgb(195,237,14) 0%,rgb(193,237,14) 50%,rgb(188,236,14) 100%);">112.5</div>
<div class="td" style="left:418.55px;top:280.83px;width:65.45px;height:23.33px;background:linear-gradient(90deg,rgb(181,235,14) 0%,rgb(176,234,14) 50%,rgb(169,234,14) 100%);">115.7</div>
<div class="td" style="left:483.00px;top:280.83px;width:65.45px;height:23.33px;background:linear-gradient(90deg,rgb(160,233,14) 0%,rgb(153,232,15) 50%,rgb(156,233,14) 100%);">119.1</div>
<div class="td" style="left:547.45px;top:280.83px;width:65.45px;height:23.33px;background:linear-gradient(90deg,rgb(159,233,14) 0%,rgb(161,233,14) 50%,rgb(161,233,14) 100%);">118.1</div>
<div class="td" style="left:611.90px;top:280.83px;width:65.45px;height:23.33px;background:linear-gradient(90deg,rgb(161,233,14) 0%,rgb(160,233,14) 50%,rgb(160,233,14) 100%);">118.2</div>
<div class="td" style="left:676.35px;top:280.83px;width:65.45px;height:23.33px;background:linear-gradient(90deg,rgb(160,233,14) 0%,rgb(160,233,14) 50%,rgb(161,233,14) 100%);">118.2</div>
<div class="td" style="left:740.80px;top:280.83px;width:65.45px;height:23.33px;background:linear-gradient(90deg,rgb(161,233,14) 0%,rgb(161,233,14) 50%,rgb(161,233,14) 100%);">118.1</div>
<div class="td" style="left:-32.60px;top:303.66px;width:65.45px;height:23.33px;background:linear-gradient(90deg,rgb(242,143,14) 0%,rgb(242,143,14) 50%,rgb(243,146,14) 100%);">87.5</div>
<div class="td" style="left:31.85px;top:303.66px;width:65.45px;height:23.33px;background:linear-gradient(90deg,rgb(243,150,14) 0%,rgb(243,153,14) 50%,rgb(243,156,14) 100%);">89.1</div>
<div class="td" style="left:96.30px;top:303.66px;width:65.45px;height:23.33px;background:linear-gradient(90deg,rgb(243,160,13) 0%,rgb(243,163,13) 50%,rgb(244,168,13) 100%);">90.8</div>
<div class="td" style="left:160.75px;top:303.66px;width:65.45px;height:23.33px;background:linear-gradient(90deg,rgb(244,174,12) 0%,rgb(244,179,12) 50%,rgb(244,185,11) 100%);">93.5</div>
<div class="td" style="left:225.20px;top:303.66px;width:65.45px;height:23.33px;background:linear-gradient(90deg,rgb(243,193,10) 0%,rgb(243,199,10) 50%,rgb(243,201,10) 100%);">97.2</div>
<div class="td" style="left:289.65px;top:303.66px;width:65.45px;height:23.33px;background:linear-gradient(90deg,rgb(243,204,9) 0%,rgb(242,206,9) 50%,rgb(242,207,9) 100%);">98.8</div>
<div class="td" style="left:354.10px;top:303.66px;width:65.45px;height:23.33px;background:linear-gradient(90deg,rgb(242,207,9) 0%,rgb(242,208,9) 50%,rgb(242,213,9) 100%);">99.1</div>
<div class="td" style="left:418.55px;top:303.66px;width:65.45px;height:23.33px;background:linear-gradient(90deg,rgb(241,219,9) 0%,rgb(240,224,10) 50%,rgb(240,226,10) 100%);">102.6</div>
<div class="td" style="left:483.00px;top:303.66px;width:65.45px;height:23.33px;background:linear-gradient(90deg,rgb(239,228,11) 0%,rgb(239,230,11) 50%,rgb(236,233,12) 100%);">103.9</div>
<div class="td" style="left:547.45px;top:303.66px;width:65.45px;height:23.33px;background:linear-gradient(90deg,rgb(233,236,13) 0%,rgb(231,239,14) 50%,rgb(231,239,14) 100%);">106.2</div>
<div class="td" style="left:611.90px;top:303.66px;width:65.45px;height:23.33px;background:linear-gradient(90deg,rgb(230,239,14) 0%,rgb(230,239,14) 50%,rgb(230,239,14) 100%);">106.4</div>
<div class="td" style="left:676.35px;top:303.66px;width:65.45px;height:23.33px;background:linear-gradient(90deg,rgb(230,239,14) 0%,rgb(230,239,14) 50%,rgb(230,239,14) 100%);">106.4</div>
<div class="td" style="left:740.80px;top:303.66px;width:65.45px;height:23.33px;background:linear-gradient(90deg,rgb(230,239,14) 0%,rgb(230,239,14) 50%,rgb(230,239,14) 100%);">106.3</div>
<div class="td" style="left:-32.60px;top:326.49px;width:65.45px;height:23.33px;background:linear-gradient(90deg,rgb(242,139,14) 0%,rgb(242,139,14) 50%,rgb(242,142,14) 100%);">86.8</div>
<div class="td" style="left:31.85px;top:326.49px;width:65.45px;height:23.33px;background:#1e90ff;color:#fff;">88.5</div>
<div class="td" style="left:96.30px;top:326.49px;width:65.45px;height:23.33px;background:linear-gradient(90deg,rgb(243,147,14) 0%,rgb(243,147,14) 50%,rgb(243,148,14) 100%);">88.1</div>
<div class="td" style="left:160.75px;top:326.49px;width:65.45px;height:23.33px;background:linear-gradient(90deg,rgb(243,149,14) 0%,rgb(243,150,14) 50%,rgb(243,157,14) 100%);">88.7</div>
<div class="td" style="left:225.20px;top:326.49px;width:65.45px;height:23.33px;background:linear-gradient(90deg,rgb(244,165,13) 0%,rgb(244,172,12) 50%,rgb(244,175,12) 100%);">92.3</div>
<div class="td" style="left:289.65px;top:326.49px;width:65.45px;height:23.33px;background:linear-gradient(90deg,rgb(244,180,12) 0%,rgb(244,184,11) 50%,rgb(244,184,11) 100%);">94.4</div>
<div class="td" style="left:354.10px;top:326.49px;width:65.45px;height:23.33px;background:linear-gradient(90deg,rgb(244,185,11) 0%,rgb(244,185,11) 50%,rgb(243,190,11) 100%);">94.7</div>
<div class="td" style="left:418.55px;top:326.49px;width:65.45px;height:23.33px;background:linear-gradient(90deg,rgb(243,197,10) 0%,rgb(243,202,9) 50%,rgb(243,204,9) 100%);">97.9</div>
<div class="td" style="left:483.00px;top:326.49px;width:65.45px;height:23.33px;background:linear-gradient(90deg,rgb(242,207,9) 0%,rgb(242,209,8) 50%,rgb(242,208,9) 100%);">99.3</div>
<div class="td" style="left:547.45px;top:326.49px;width:65.45px;height:23.33px;background:linear-gradient(90deg,rgb(242,207,9) 0%,rgb(242,206,9) 50%,rgb(242,207,9) 100%);">98.8</div>
<div class="td" style="left:611.90px;top:326.49px;width:65.45px;height:23.33px;background:linear-gradient(90deg,rgb(242,207,9) 0%,rgb(242,208,9) 50%,rgb(242,208,9) 100%);">99.1</div>
<div class="td" style="left:676.35px;top:326.49px;width:65.45px;height:23.33px;background:linear-gradient(90deg,rgb(242,208,9) 0%,rgb(242,208,9) 50%,rgb(242,208,9) 100%);">99.2</div>
<div class="td" style="left:740.80px;top:326.49px;width:65.45px;height:23.33px;background:linear-gradient(90deg,rgb(242,208,9) 0%,rgb(242,208,9) 50%,rgb(242,208,9) 100%);">99.1</div>
<div class="td" style="left:-32.60px;top:349.32px;width:65.45px;height:23.33px;background:linear-gradient(90deg,rgb(242,127,14) 0%,rgb(242,127,14) 50%,rgb(242,131,14) 100%);">84.9</div>
<div class="td" style="left:31.85px;top:349.32px;width:65.45px;height:23.33px;background:linear-gradient(90deg,rgb(242,135,14) 0%,rgb(242,138,14) 50%,rgb(242,138,14) 100%);">86.7</div>
<div class="td" style="left:96.30px;top:349.32px;width:65.45px;height:23.33px;background:linear-gradient(90deg,rgb(242,138,14) 0%,rgb(242,138,14) 50%,rgb(242,139,14) 100%);">86.6</div>
<div class="td" style="left:160.75px;top:349.32px;width:65.45px;height:23.33px;background:linear-gradient(90deg,rgb(242,141,14) 0%,rgb(242,143,14) 50%,rgb(243,149,14) 100%);">87.5</div>
<div class="td" style="left:225.20px;top:349.32px;width:65.45px;height:23.33px;background:linear-gradient(90deg,rgb(243,158,13) 0%,rgb(244,164,13) 50%,rgb(244,167,13) 100%);">91.0</div>
<div class="td" style="left:289.65px;top:349.32px;width:65.45px;height:23.33px;background:linear-gradient(90deg,rgb(244,171,12) 0%,rgb(244,174,12) 50%,rgb(244,176,12) 100%);">92.7</div>
<div class="td" style="left:354.10px;top:349.32px;width:65.45px;height:23.33px;background:linear-gradient(90deg,rgb(244,177,12) 0%,rgb(244,179,12) 50%,rgb(244,180,12) 100%);">93.5</div>
<div class="td" style="left:418.55px;top:349.32px;width:65.45px;height:23.33px;background:linear-gradient(90deg,rgb(244,182,11) 0%,rgb(244,183,11) 50%,rgb(244,183,11) 100%);">94.3</div>
<div class="td" style="left:483.00px;top:349.32px;width:65.45px;height:23.33px;background:linear-gradient(90deg,rgb(244,182,11) 0%,rgb(244,182,11) 50%,rgb(244,181,12) 100%);">94.1</div>
<div class="td" style="left:547.45px;top:349.32px;width:65.45px;height:23.33px;background:linear-gradient(90deg,rgb(244,181,12) 0%,rgb(244,180,12) 50%,rgb(244,180,12) 100%);">93.7</div>
<div class="td" style="left:611.90px;top:349.32px;width:65.45px;height:23.33px;background:linear-gradient(90deg,rgb(244,181,12) 0%,rgb(244,182,12) 50%,rgb(244,182,11) 100%);">94.0</div>
<div class="td" style="left:676.35px;top:349.32px;width:65.45px;height:23.33px;background:linear-gradient(90deg,rgb(244,182,11) 0%,rgb(244,182,11) 50%,rgb(244,182,11) 100%);">94.1</div>
<div class="td" style="left:740.80px;top:349.32px;width:65.45px;height:23.33px;background:linear-gradient(90deg,rgb(244,182,11) 0%,rgb(244,182,12) 50%,rgb(244,182,12) 100%);">94.0</div>
<div class="td" style="left:-32.60px;top:372.15px;width:65.45px;height:23.33px;background:linear-gradient(90deg,rgb(241,116,14) 0%,rgb(241,116,14) 50%,rgb(241,119,14) 100%);">83.0</div>
<div class="td" style="left:31.85px;top:372.15px;width:65.45px;height:23.33px;background:linear-gradient(90deg,rgb(241,124,14) 0%,rgb(242,127,14) 50%,rgb(242,128,14) 100%);">84.9</div>
<div class="td" style="left:96.30px;top:372.15px;width:65.45px;height:23.33px;background:linear-gradient(90deg,rgb(242,128,14) 0%,rgb(242,129,14) 50%,rgb(242,129,14) 100%);">85.1</div>
<div class="td" style="left:160.75px;top:372.15px;width:65.45px;height:23.33px;background:linear-gradient(90deg,rgb(242,129,14) 0%,rgb(242,130,14) 50%,rgb(242,135,14) 100%);">85.3</div>
<div class="td" style="left:225.20px;top:372.15px;width:65.45px;height:23.33px;background:linear-gradient(90deg,rgb(242,142,14) 0%,rgb(243,148,14) 50%,rgb(243,148,14) 100%);">88.3</div>
<div class="td" style="left:289.65px;top:372.15px;width:65.45px;height:23.33px;background:linear-gradient(90deg,rgb(243,148,14) 0%,rgb(243,148,14) 50%,rgb(243,148,14) 100%);">88.3</div>
<div class="td" style="left:354.10px;top:372.15px;width:65.45px;height:23.33px;background:linear-gradient(90deg,rgb(243,148,14) 0%,rgb(243,148,14) 50%,rgb(243,148,14) 100%);">88.4</div>
<div class="td" style="left:418.55px;top:372.15px;width:65.45px;height:23.33px;background:linear-gradient(90deg,rgb(243,147,14) 0%,rgb(243,146,14) 50%,rgb(243,146,14) 100%);">88.0</div>
<div class="td" style="left:483.00px;top:372.15px;width:65.45px;height:23.33px;background:linear-gradient(90deg,rgb(243,145,14) 0%,rgb(243,145,14) 50%,rgb(243,144,14) 100%);">87.8</div>
<div class="td" style="left:547.45px;top:372.15px;width:65.45px;height:23.33px;background:linear-gradient(90deg,rgb(243,144,14) 0%,rgb(242,143,14) 50%,rgb(243,143,14) 100%);">87.5</div>
<div class="td" style="left:611.90px;top:372.15px;width:65.45px;height:23.33px;background:linear-gradient(90deg,rgb(243,144,14) 0%,rgb(243,144,14) 50%,rgb(243,144,14) 100%);">87.7</div>
<div class="td" style="left:676.35px;top:372.15px;width:65.45px;height:23.33px;background:linear-gradient(90deg,rgb(243,145,14) 0%,rgb(243,145,14) 50%,rgb(243,145,14) 100%);">87.8</div>
<div class="td" style="left:740.80px;top:372.15px;width:65.45px;height:23.33px;background:linear-gradient(90deg,rgb(243,144,14) 0%,rgb(243,144,14) 50%,rgb(243,144,14) 100%);">87.7</div>
<div class="td" style="left:-32.60px;top:394.98px;width:65.45px;height:23.33px;background:linear-gradient(90deg,rgb(241,112,14) 0%,rgb(241,112,14) 50%,rgb(241,114,14) 100%);">81.9</div>
<div class="td" style="left:31.85px;top:394.98px;width:65.45px;height:23.33px;background:linear-gradient(90deg,rgb(241,118,14) 0%,rgb(241,120,14) 50%,rgb(241,122,14) 100%);">83.7</div>
<div class="td" style="left:96.30px;top:394.98px;width:65.45px;height:23.33px;background:linear-gradient(90deg,rgb(241,124,14) 0%,rgb(242,126,14) 50%,rgb(242,126,14) 100%);">84.7</div>
<div class="td" style="left:160.75px;top:394.98px;width:65.45px;height:23.33px;background:linear-gradient(90deg,rgb(242,126,14) 0%,rgb(242,126,14) 50%,rgb(242,127,14) 100%);">84.6</div>
<div class="td" style="left:225.20px;top:394.98px;width:65.45px;height:23.33px;background:linear-gradient(90deg,rgb(242,130,14) 0%,rgb(242,132,14) 50%,rgb(242,132,14) 100%);">85.6</div>
<div class="td" style="left:289.65px;top:394.98px;width:65.45px;height:23.33px;background:linear-gradient(90deg,rgb(242,132,14) 0%,rgb(242,132,14) 50%,rgb(242,132,14) 100%);">85.6</div>
<div class="td" style="left:354.10px;top:394.98px;width:65.45px;height:23.33px;background:linear-gradient(90deg,rgb(242,132,14) 0%,rgb(242,132,14) 50%,rgb(242,132,14) 100%);">85.6</div>
<div class="td" style="left:418.55px;top:394.98px;width:65.45px;height:23.33px;background:linear-gradient(90deg,rgb(242,132,14) 0%,rgb(242,133,14) 50%,rgb(242,132,14) 100%);">85.8</div>
<div class="td" style="left:483.00px;top:394.98px;width:65.45px;height:23.33px;background:linear-gradient(90deg,rgb(242,130,14) 0%,rgb(242,129,14) 50%,rgb(242,128,14) 100%);">85.2</div>
<div class="td" style="left:547.45px;top:394.98px;width:65.45px;height:23.33px;background:linear-gradient(90deg,rgb(242,125,14) 0%,rgb(241,124,14) 50%,rgb(241,125,14) 100%);">84.3</div>
<div class="td" style="left:611.90px;top:394.98px;width:65.45px;height:23.33px;background:linear-gradient(90deg,rgb(242,125,14) 0%,rgb(242,126,14) 50%,rgb(242,126,14) 100%);">84.7</div>
<div class="td" style="left:676.35px;top:394.98px;width:65.45px;height:23.33px;background:linear-gradient(90deg,rgb(242,127,14) 0%,rgb(242,127,14) 50%,rgb(242,127,14) 100%);">84.8</div>
<div class="td" style="left:740.80px;top:394.98px;width:65.45px;height:23.33px;background:linear-gradient(90deg,rgb(242,126,14) 0%,rgb(242,126,14) 50%,rgb(242,126,14) 100%);">84.7</div>
<div class="td" style="left:-32.60px;top:417.81px;width:65.45px;height:23.33px;background:linear-gradient(90deg,rgb(240,107,14) 0%,rgb(240,107,14) 50%,rgb(240,109,14) 100%);">80.8</div>
<div class="td" style="left:31.85px;top:417.81px;width:65.45px;height:23.33px;background:linear-gradient(90deg,rgb(241,111,14) 0%,rgb(241,113,14) 50%,rgb(241,114,14) 100%);">82.3</div>
<div class="td" style="left:96.30px;top:417.81px;width:65.45px;height:23.33px;background:linear-gradient(90deg,rgb(241,116,14) 0%,rgb(241,117,14) 50%,rgb(241,116,14) 100%);">83.1</div>
<div class="td" style="left:160.75px;top:417.81px;width:65.45px;height:23.33px;background:linear-gradient(90deg,rgb(241,116,14) 0%,rgb(241,116,14) 50%,rgb(241,119,14) 100%);">82.9</div>
<div class="td" style="left:225.20px;top:417.81px;width:65.45px;height:23.33px;background:linear-gradient(90deg,rgb(241,123,14) 0%,rgb(242,126,14) 50%,rgb(241,124,14) 100%);">84.6</div>
<div class="td" style="left:289.65px;top:417.81px;width:65.45px;height:23.33px;background:linear-gradient(90deg,rgb(241,122,14) 0%,rgb(241,120,14) 50%,rgb(241,120,14) 100%);">83.7</div>
<div class="td" style="left:354.10px;top:417.81px;width:65.45px;height:23.33px;background:linear-gradient(90deg,rgb(241,120,14) 0%,rgb(241,120,14) 50%,rgb(241,121,14) 100%);">83.7</div>
<div class="td" style="left:418.55px;top:417.81px;width:65.45px;height:23.33px;background:linear-gradient(90deg,rgb(241,123,14) 0%,rgb(241,124,14) 50%,rgb(241,121,14) 100%);">84.4</div>
<div class="td" style="left:483.00px;top:417.81px;width:65.45px;height:23.33px;background:linear-gradient(90deg,rgb(241,117,14) 0%,rgb(241,114,14) 50%,rgb(241,112,14) 100%);">82.6</div>
<div class="td" style="left:547.45px;top:417.81px;width:65.45px;height:23.33px;background:linear-gradient(90deg,rgb(240,110,14) 0%,rgb(240,108,14) 50%,rgb(240,109,14) 100%);">81.0</div>
<div class="td" style="left:611.90px;top:417.81px;width:65.45px;height:23.33px;background:linear-gradient(90deg,rgb(240,109,14) 0%,rgb(240,110,14) 50%,rgb(241,110,14) 100%);">81.5</div>
<div class="td" style="left:676.35px;top:417.81px;width:65.45px;height:23.33px;background:linear-gradient(90deg,rgb(241,110,14) 0%,rgb(241,110,14) 50%,rgb(241,110,14) 100%);">81.6</div>
<div class="td" style="left:740.80px;top:417.81px;width:65.45px;height:23.33px;background:linear-gradient(90deg,rgb(241,110,14) 0%,rgb(240,110,14) 50%,rgb(240,110,14) 100%);">81.5</div>
<div style="left:-32.60px;top:440.64px;width:65.45px;height:6px;background:rgb(240,104,14);"></div>
<div style="left:31.85px;top:440.64px;width:65.45px;height:6px;background:rgb(240,108,14);"></div>
<div style="left:96.30px;top:440.64px;width:65.45px;height:6px;background:rgb(241,112,14);"></div>
<div style="left:160.75px;top:440.64px;width:65.45px;height:6px;background:rgb(241,111,14);"></div>
<div style="left:225.20px;top:440.64px;width:65.45px;height:6px;background:rgb(241,118,14);"></div>
<div style="left:289.65px;top:440.64px;width:65.45px;height:6px;background:rgb(241,114,14);"></div>
<div style="left:354.10px;top:440.64px;width:65.45px;height:6px;background:rgb(241,114,14);"></div>
<div style="left:418.55px;top:440.64px;width:65.45px;height:6px;background:rgb(241,117,14);"></div>
<div style="left:483.00px;top:440.64px;width:65.45px;height:6px;background:rgb(240,110,14);"></div>
<div style="left:547.45px;top:440.64px;width:65.45px;height:6px;background:rgb(240,104,14);"></div>
<div style="left:611.90px;top:440.64px;width:65.45px;height:6px;background:rgb(240,105,14);"></div>
<div style="left:676.35px;top:440.64px;width:65.45px;height:6px;background:rgb(240,106,14);"></div>
<div style="left:740.80px;top:440.64px;width:65.45px;height:6px;background:rgb(240,105,14);"></div>
<svg style="left:0;top:0" width="745.8" height="446" viewBox="0 0 745.8 446" stroke="#b9bfb4" stroke-opacity=".8" stroke-width="1.15" fill="none"><path d="M-31.85 29.7 V446 M32.60 29.7 V446 M97.05 29.7 V446 M161.50 29.7 V446 M225.95 29.7 V446 M290.40 29.7 V446 M354.85 29.7 V446 M419.30 29.7 V446 M483.75 29.7 V446 M548.20 29.7 V446 M612.65 29.7 V446 M677.10 29.7 V446 M741.55 29.7 V446 M806.00 29.7 V446 M0 29.70 H745.8 M0 52.53 H745.8 M0 75.36 H745.8 M0 98.19 H745.8 M0 121.02 H745.8 M0 143.85 H745.8 M0 166.68 H745.8 M0 189.51 H745.8 M0 212.34 H745.8 M0 235.17 H745.8 M0 258.00 H745.8 M0 280.83 H745.8 M0 303.66 H745.8 M0 326.49 H745.8 M0 349.32 H745.8 M0 372.15 H745.8 M0 394.98 H745.8 M0 417.81 H745.8 M0 440.64 H745.8 "/></svg>
</div>
<div style="left:746.7px;top:310.2px;width:22.8px;height:443.6px;background:#414141;"></div>
<svg style="left:746.7px;top:310.2px" width="23" height="24" viewBox="0 0 23 24"><path d="M3.3 15.6 L9.8 5.8 L16.3 15.6 Z" fill="#6a6a6a"/></svg>
<div style="left:749.7px;top:334.3px;width:14.2px;height:230.0px;background:#636363;"></div>
<div style="left:0.0px;top:753.8px;width:930.0px;height:24.4px;background:#414143;"></div>
<div style="left:0.0px;top:758.4px;width:184.5px;height:13.0px;background:#646464;"></div>
<div style="left:0.0px;top:778.2px;width:930.0px;height:5.0px;background:#2d2d2b;"></div>
<div style="left:0.0px;top:783.0px;width:930.0px;height:22.4px;background:#464646;"></div>
<div style="left:0.0px;top:786.5px;width:823.0px;height:13.5px;background:#626262;"></div>
<div style="left:0.0px;top:805.0px;width:930.0px;height:1.0px;background:#3a3a3a;"></div>
<div style="left:0.0px;top:806.0px;width:930.0px;height:2.0px;background:#e2e2e2;"></div>
<div style="left:0.0px;top:808.0px;width:930.0px;height:8.0px;background:#2a2a2a;"></div>
<div style="left:0.0px;top:815.6px;width:930.0px;height:1.2px;background:#555;"></div>
<div style="left:0.0px;top:816.8px;width:930.0px;height:114.0px;background:#000;"></div>
<svg style="left:0;top:816.8px" width="930" height="113.2" viewBox="0 816.8 930 113.2" fill="none" stroke-width="1.3" stroke-linejoin="miter"><path d="M0 822.6 H167" stroke="#d9b9a2" stroke-width="1.4"/><path d="M230 825.5 H256 V827.5 H352 V829.4 H393.5 V832 H412" stroke="#dcc3ad"/><path d="M469.7 835.0 H484.0 V836.6 H499.0 V838.4 H517.0 V840.0 H551.6 V842.3 H568.0 V844.2 H585.0 V846.0 H600.0 V847.6 H613.5 V849.2 H628.0 V850.6 H642.0 V852.0 H655.0 V854.0 H667.7 V856.0 H681.0 V857.3 H693.5 V858.5 H702.0 V860.0 H711.6 V861.6 H722.0 V863.0 H732.0 V864.2 H745.0 V866.0 H760.0 V868.5 H775.0 V871.0 H790.0 V873.6 H806.4 V876.3 H820.0 V879.0 H834.0 V881.6 H848.4 V884.2 H865.0 V886.8 H880.0 V889.2 H898.0 V891.7 H912.0 V894.0 H930.0 V896.6" stroke="#dcc3ad"/><path d="M75.0 877.6 H98.7 V875.8 H123.0 V874.5 H150.0 V873.0 H168.0 V872.0 H186.5 V870.6 H200.0 V869.3 H215.0 V868.0 H225.0 V866.8 H235.5 V865.5 H246.0 V864.2 H256.0 V863.0 H265.0 V861.0 H274.0 V859.0 H282.0 V857.5 H289.7 V856.0 H295.5 V854.3 H300.0 V852.6 H305.0 V850.4 H311.0 V848.0 H318.0 V845.8 H326.5 V843.5 H334.0 V840.8 H342.0 V838.0 H350.0 V835.3 H357.4 V832.7 H364.0 V830.4 H370.3 V828.0 H383.0 V826.5 H396.0 V824.6 H486.0 V825.2 H494.0 V824.6 H515.0 V824.6 H626.5 V826.8 H709.0 V828.5 H759.4 V828.6 H771.7 V826.9 H784.0 V828.6 H804.0 V826.9 H813.8 V828.5 H915.0 V828.5 H923.8 V831.0 H925.0 V863.0 H930.0 V863.0" stroke="#7fd07d"/><path d="M75.0 896.5 H84.5 V897.8 H91.0 V899.0 H101.0 V899.0 H111.6 V900.8 H127.0 V902.4 H145.0 V903.4 H163.0 V905.0 H189.0 V906.0 H194.0 V907.5 H215.0 V907.5 H235.5 V906.8 H245.8 V905.0 H266.5 V903.4 H274.0 V904.2 H279.0 V906.0 H284.5 V908.0 H288.0 V910.0 H292.0 V912.0 H296.0 V914.5 H303.0 V916.0 H311.0 V917.0 H319.0 V919.0 H326.5 V921.0 H334.0 V922.3 H342.0 V923.5 H356.0 V924.6 H370.3 V925.6 H393.5 V924.8 H398.7 V922.3 H404.0 V921.0 H409.0 V919.7 H424.5 V919.7 H434.8 V921.5 H447.0 V922.5 H460.6 V923.5 H473.0 V924.6 H486.5 V925.6 H500.0 V926.0 H515.5 V927.4 H595.5 V927.4 H602.0 V926.0 H608.0 V927.4 H660.0 V926.0 H680.6 V924.8 H700.0 V923.8 H720.0 V922.5 H760.0 V923.5 H812.0 V923.4 H818.7 V920.8 H826.0 V923.5 H905.3 V923.5 H910.2 V918.8 H915.0 V915.0 H920.0 V912.6 H930.0 V912.6" stroke="#a5e2da"/><path d="M0.0 923.5 L94.8 923.5 L94.8 927.4 L220.0 927.4 L220.0 923.5 L244.5 923.5 L244.5 927.4 L260.0 927.4 L260.0 923.5 L329.0 923.5 L329.0 918.4 L352.3 918.4 L352.3 913.2 L380.6 913.2 L380.6 908.0 L398.7 908.0 L398.7 903.4 L486.5 903.4 L486.5 908.6 L498.0 908.6 L498.0 912.7 L542.6 912.7 L542.6 917.9 L727.0 917.9 L727.0 912.7 L776.7 912.7 L776.7 908.5 L800.0 908.5 L800.0 903.5 L815.0 903.5 L815.0 897.0 L830.0 897.0 L830.0 891.0 L846.0 891.0 L846.0 888.7 L858.3 888.7 L858.3 883.0 L868.0 883.0 L868.0 876.8 L875.7 876.8 L875.7 873.8 L898.0 873.8 L898.0 868.0 L907.8 868.0 L907.8 858.0 L914.0 858.0 L914.0 854.0 L923.8 854.0 L923.8 848.3 L930.0 848.3" stroke="#e9e636" stroke-width="1.5"/><path d="M93.5 907.4 H111.0 V904.6 H123.5 V903.6 H136.0 V902.6 H148.5 V901.7 H161.0 V900.7 H173.5 V899.8 H186.0 V898.8 H198.5 V897.9 H211.0 V896.9 H223.5 V896.0 H236.0 V895.0 H248.5 V894.0 H261.0 V893.1 H273.5 V892.1 H286.0 V891.2 H298.5 V890.2 H311.0 V888.8 H323.5 V887.4 H336.0 V885.9 H348.5 V884.5 H361.0 V883.0 H373.5 V881.6 H386.0 V880.1 H398.5 V878.7 H411.0 V877.2 H423.5 V875.8 H436.0 V874.3 H448.5 V872.9 H461.0 V871.4 H473.5 V870.0 H486.0 V868.5 H498.5 V867.1 H511.0 V865.6 H523.5 V864.2 H536.0 V862.9 H548.5 V861.6 H561.0 V860.4 H573.5 V859.1 H586.0 V857.8 H598.5 V856.5 H611.0 V855.2 H623.5 V853.9 H636.0 V852.6 H648.5 V851.2 H661.0 V849.8 H673.5 V848.4 H686.0 V846.9 H698.5 V845.5 H711.0 V844.0 H723.5 V842.6 H736.0 V841.2 H748.5 V839.7 H761.0 V838.1 H773.5 V836.6 H786.0 V835.1 H798.5 V833.6 H811.0 V832.1 H823.5 V830.7 H836.0 V829.3 H848.5 V827.9 H861.0 V826.5 H873.5 V825.0 H886.0 V823.5 H898.5 V822.0 H911.0 V821.8 H923.5 V821.6 H930.0 V821.5" stroke="#a9c9ea"/><path d="M75.0 908.6 H88.4 V908.6 H93.5 V906.8 H106.0 V905.8 H118.5 V904.9 H131.0 V903.9 H143.5 V903.0 H156.0 V902.0 H168.5 V901.1 H181.0 V900.1 H193.5 V899.1 H206.0 V898.2 H218.5 V897.2 H231.0 V896.3 H243.5 V895.3 H256.0 V894.4 H268.5 V893.4 H281.0 V892.5 H293.5 V891.5 H306.0 V890.3 H318.5 V888.9 H331.0 V887.4 H343.5 V886.0 H356.0 V884.5 H368.5 V883.1 H381.0 V881.6 H393.5 V880.2 H406.0 V878.7 H418.5 V877.3 H431.0 V875.8 H443.5 V874.4 H456.0 V872.9 H468.5 V871.5 H481.0 V870.0 H493.5 V868.6 H506.0 V867.1 H518.5 V865.7 H531.0 V864.4 H543.5 V863.1 H556.0 V861.8 H568.5 V860.5 H581.0 V859.2 H593.5 V857.9 H606.0 V856.6 H618.5 V855.3 H631.0 V854.0 H643.5 V852.7 H656.0 V851.3 H668.5 V849.8 H681.0 V848.4 H693.5 V847.0 H706.0 V845.5 H718.5 V844.1 H731.0 V842.6 H743.5 V841.2 H756.0 V839.6 H768.5 V838.1 H781.0 V836.6 H793.5 V835.1 H806.0 V833.5 H818.5 V832.1 H831.0 V830.7 H843.5 V829.3 H856.0 V827.9 H868.5 V826.5 H881.0 V825.0 H893.5 V823.5 H906.0 V822.8 H918.5 V822.6 H930.0 V822.4" stroke="#e27c7c"/><path d="M167 822.6 H205 V824 H215 V822.6 H325 V824 H334 V822.6 H369 V824 H377 V822.6 H585 V824 H591 V822.6 H898 L912.7 825.3 L917.6 832.3 L920 842 H923.8 V891.6 H928.4" stroke="#e00c0c" stroke-width="2"/><path d="M929 864 V930" stroke="#e00c0c" stroke-width="2.4"/><path d="M806.9 817 V930" stroke="#f4f4f4" stroke-width="1.5" stroke-dasharray="4.2 2.2"/></svg>
<div class="lg" style="left:18.2px;top:826.6px;width:60.0px;height:14.0px;color:#7fd596;">MAP</div>
<div class="lg" style="left:150.6px;top:826.6px;width:100.0px;height:14.0px;color:#d6e12c;font-size:14.5px;letter-spacing:.25px;-webkit-text-stroke:.35px #d6e12c;">In-Air Temp</div>
<div class="lg" style="left:282.8px;top:826.6px;width:50.0px;height:14.0px;color:#dcc3ad;background:#000;padding-right:4px;font-size:13.2px;letter-spacing:-.4px;">CTS</div>
<div class="lg" style="left:415.0px;top:826.6px;width:53.0px;height:14.0px;color:#e08a8a;background:#000;padding-left:1.6px;letter-spacing:.25px;">VehSpd</div>
<div class="lg" style="left:547.5px;top:827.2px;width:90.0px;height:14.0px;color:#94cbe2;font-size:14.2px;letter-spacing:.25px;">O2 Lambda</div>
<div style="left:-10.0px;top:849.4px;width:85.0px;height:66.6px;background:#222;border:1.2px solid #555;"></div>
<div style="left:1.3px;top:850.6px;width:80.0px;height:17.0px;overflow:hidden;font-size:14.4px;color:#f2f2f2;line-height:16px;-webkit-text-stroke:.25px #f2f2f2;"><span style="left:-34.1px;top:0;">Speed: 1.000x</span></div>
<div style="left:27.6px;top:872.7px;width:37.0px;height:37.8px;background:#444446;border:1.2px solid #161616;border-radius:3px;"></div>
<svg style="left:29.4px;top:874.5px" width="32" height="32" viewBox="0 0 32 32"><circle cx="15.8" cy="15.8" r="15.1" fill="#c9c9c9"/><path d="M7.8 9 L23.8 22.2 M23.8 9 L7.8 22.2" stroke="#5a5a5a" stroke-width="1.2"/></svg>
<div style="left:780.3px;top:520.7px;width:123.1px;height:30.0px;background:#2f2f2b;"></div>
<div style="left:780.3px;top:541.8px;width:108.6px;height:12.0px;border:1.8px solid #e4e4e4;border-bottom:none;border-left:none;background:#000;"></div>
<div style="left:725.8px;top:547.5px;width:206.0px;height:230.4px;background:#2a2a27;"></div>
<div class="tt" style="left:739.4px;top:560.6px;width:190.0px;height:20.0px;letter-spacing:0.15px;">Base Fuel Tuning</div>
<div class="tt" style="left:739.4px;top:585.9px;width:190.0px;height:20.0px;letter-spacing:0.42px;">1000 RPM, -1.5 psi</div>
<div class="tt" style="left:739.4px;top:611.1px;width:190.0px;height:20.0px;letter-spacing:0.26px;">Cell Value: 88.5 %</div>
<div class="tt" style="left:739.4px;top:636.4px;width:190.0px;height:20.0px;letter-spacing:0.44px;">Output: 144.6 %</div>
<svg style="left:725.8px;top:620px" width="204.2" height="140" viewBox="725.8 620 204.2 140"><defs><linearGradient id="sg" gradientUnits="userSpaceOnUse" x1="0" y1="632" x2="0" y2="733"><stop offset="0" stop-color="#1fb420"/><stop offset=".2" stop-color="#30c81e"/><stop offset=".36" stop-color="#7ed61c"/><stop offset=".48" stop-color="#cbe21c"/><stop offset=".58" stop-color="#f0e01c"/><stop offset=".68" stop-color="#f4b420"/><stop offset=".78" stop-color="#f07e22"/><stop offset=".88" stop-color="#ee461c"/><stop offset="1" stop-color="#de1e0c"/></linearGradient><linearGradient id="sl" gradientUnits="userSpaceOnUse" x1="806" y1="696" x2="846" y2="680"><stop offset="0" stop-color="#ecdcb0" stop-opacity=".95"/><stop offset=".5" stop-color="#ecdc8a" stop-opacity=".45"/><stop offset="1" stop-color="#ecdc9a" stop-opacity="0"/></linearGradient><radialGradient id="sb" gradientUnits="userSpaceOnUse" cx="856" cy="707" r="26"><stop offset="0" stop-color="#f4d8c0" stop-opacity=".6"/><stop offset="1" stop-color="#f4d8c0" stop-opacity="0"/></radialGradient><clipPath id="sc"><path d="M805.6 693.2 L820 688.4 L835 680.2 L846 668.3 L863 653 L872.6 644 L882.5 634.8 L892.3 632 L911.8 634 L930 638.3 V732.8 H874 L871.3 729 L863 721.5 L853 708.9 L836.3 699 Z"/></clipPath></defs><g stroke="#8a8a86" stroke-width="1.1" fill="none"><path d="M805.6 632.8 V728"/><path d="M814.4 632.8 V728"/><path d="M823.2 632.8 V728"/><path d="M832.0 632.8 V728"/><path d="M840.8 632.8 V728"/><path d="M849.6 632.8 V728"/><path d="M858.4 632.8 V728"/><path d="M867.2 632.8 V728"/><path d="M876.0 632.8 V728"/><path d="M805.6 632.8 H890 M805.6 728 H871"/></g><path d="M805.6 726.6 L871.3 729.6 L874 733 H930 V735.6 H870 L805.6 730.4 Z" fill="#8c8c8a"/><path d="M805.6 693.2 L820 688.4 L835 680.2 L846 668.3 L863 653 L872.6 644 L882.5 634.8 L892.3 632 L911.8 634 L930 638.3 V732.8 H874 L871.3 729 L863 721.5 L853 708.9 L836.3 699 Z" fill="url(#sg)"/><path d="M805.6 693.2 L820 688.4 L835 680.2 L846 668.3 L863 653 L872.6 644 L882.5 634.8 L892.3 632 L911.8 634 L930 638.3 V732.8 H874 L871.3 729 L863 721.5 L853 708.9 L836.3 699 Z" fill="url(#sl)"/><path d="M805.6 693.2 L820 688.4 L835 680.2 L846 668.3 L863 653 L872.6 644 L882.5 634.8 L892.3 632 L911.8 634 L930 638.3 V732.8 H874 L871.3 729 L863 721.5 L853 708.9 L836.3 699 Z" fill="url(#sb)"/><g clip-path="url(#sc)" stroke="#f4efe2" stroke-opacity=".58" stroke-width="1.05" fill="none"><path d="M819.8 703.4 L828.1 697.4 L853.3 688.4 L861.8 680.0 L905.0 638.8 L936.8 636.4"/><path d="M811.6 701.8 L819.9 695.8 L845.1 686.8 L853.6 678.4 L896.8 637.2 L928.6 634.8"/><path d="M803.4 700.2 L811.7 694.2 L836.9 685.2 L845.4 676.8 L888.6 635.6 L920.4 633.2"/><path d="M795.2 698.6 L803.5 692.6 L828.7 683.6 L837.2 675.2 L880.4 634.0 L912.2 631.6"/><path d="M834.0 707.2 L842.3 701.2 L867.5 692.2 L876.0 683.8 L919.2 642.6 L951.0 640.2"/><path d="M840.0 709.3 L848.3 703.3 L873.5 694.3 L882.0 685.9 L925.2 644.7 L957.0 642.3"/><path d="M846.0 711.5 L854.3 705.5 L879.5 696.5 L888.0 688.1 L931.2 646.9 L963.0 644.5"/><path d="M852.0 713.6 L860.3 707.6 L885.5 698.6 L894.0 690.2 L937.2 649.0 L969.0 646.6"/><path d="M858.0 715.8 L866.3 709.8 L891.5 700.8 L900.0 692.4 L943.2 651.2 L975.0 648.8"/><path d="M863.2 717.7 L871.5 711.7 L896.7 702.7 L905.2 694.3 L948.4 653.1 L980.2 650.7"/><path d="M868.4 719.5 L876.7 713.5 L901.9 704.5 L910.4 696.1 L953.6 654.9 L985.4 652.5"/><path d="M873.6 721.4 L881.9 715.4 L907.1 706.4 L915.6 698.0 L958.8 656.8 L990.6 654.4"/><path d="M878.8 723.3 L887.1 717.3 L912.3 708.3 L920.8 699.9 L964.0 658.7 L995.8 656.3"/><path d="M884.0 725.2 L892.3 719.2 L917.5 710.2 L926.0 701.8 L969.2 660.6 L1001.0 658.2"/><path d="M889.2 727.0 L897.5 721.0 L922.7 712.0 L931.2 703.6 L974.4 662.4 L1006.2 660.0"/><path d="M894.4 728.9 L902.7 722.9 L927.9 713.9 L936.4 705.5 L979.6 664.3 L1011.4 661.9"/><path d="M899.6 730.8 L907.9 724.8 L933.1 715.8 L941.6 707.4 L984.8 666.2 L1016.6 663.8"/><path d="M904.8 732.6 L913.1 726.6 L938.3 717.6 L946.8 709.2 L990.0 668.0 L1021.8 665.6"/><path d="M910.0 734.5 L918.3 728.5 L943.5 719.5 L952.0 711.1 L995.2 669.9 L1027.0 667.5"/><path d="M915.2 736.4 L923.5 730.4 L948.7 721.4 L957.2 713.0 L1000.4 671.8 L1032.2 669.4"/><path d="M920.4 738.3 L928.7 732.3 L953.9 723.3 L962.4 714.9 L1005.6 673.7 L1037.4 671.3"/><path d="M925.6 740.1 L933.9 734.1 L959.1 725.1 L967.6 716.7 L1010.8 675.5 L1042.6 673.1"/><path d="M797.6 690.2 L805.6 693.2 L832.6 702.8 L845.6 710.2 L859.6 722.2 L871.6 736.2 L881.6 751.2 L889.6 767.2"/><path d="M805.3 687.6 L813.4 690.6 L840.8 700.4 L854.0 707.9 L868.2 720.0 L880.4 734.3 L890.5 749.5 L898.6 765.7"/><path d="M812.8 684.7 L821.1 687.8 L848.9 697.7 L862.3 705.3 L876.7 717.7 L889.1 732.1 L899.4 747.6 L907.6 764.0"/><path d="M819.9 680.7 L828.3 683.9 L856.5 693.9 L870.1 701.6 L884.7 714.2 L897.2 728.8 L907.7 744.5 L916.0 761.2"/><path d="M826.9 676.6 L835.4 679.8 L864.0 690.0 L877.8 697.8 L892.6 710.6 L905.3 725.4 L915.9 741.3 L924.4 758.3"/><path d="M832.3 670.6 L840.9 673.8 L869.9 684.1 L883.9 692.1 L899.0 705.0 L911.9 720.0 L922.6 736.1 L931.2 753.3"/><path d="M837.8 664.5 L846.5 667.8 L876.0 678.3 L890.1 686.3 L905.4 699.4 L918.5 714.7 L929.4 731.0 L938.1 748.5"/><path d="M843.8 659.0 L852.6 662.3 L882.5 672.9 L896.8 681.1 L912.3 694.4 L925.6 709.8 L936.6 726.4 L945.5 744.1"/><path d="M849.8 653.5 L858.7 656.8 L889.0 667.6 L903.5 675.9 L919.2 689.3 L932.6 705.0 L943.8 721.8 L952.8 739.7"/><path d="M855.7 647.9 L864.8 651.3 L895.4 662.2 L910.2 670.6 L926.1 684.2 L939.7 700.1 L951.1 717.2 L960.1 735.3"/><path d="M861.6 642.3 L870.8 645.7 L901.8 656.8 L916.8 665.3 L932.9 679.1 L946.7 695.2 L958.2 712.4 L967.4 730.8"/><path d="M867.5 636.6 L876.8 640.1 L908.2 651.3 L923.4 659.9 L939.7 673.9 L953.7 690.2 L965.3 707.7 L974.6 726.3"/><path d="M873.3 631.0 L882.8 634.5 L914.6 645.9 L930.0 654.6 L946.5 668.8 L960.7 685.3 L972.5 703.0 L981.9 721.9"/><path d="M879.2 625.4 L888.8 628.9 L921.0 640.4 L936.6 649.3 L953.3 663.6 L967.6 680.3 L979.6 698.3 L989.1 717.4"/><path d="M885.1 619.7 L894.8 623.4 L927.4 635.0 L943.2 643.9 L960.1 658.4 L974.6 675.4 L986.7 693.5 L996.4 712.9"/><path d="M897.5 630 L911.5 650 L927.5 690 L941.5 740"/><path d="M907.0 630 L921.0 650 L937.0 690 L951.0 740"/><path d="M916.5 630 L930.5 650 L946.5 690 L960.5 740"/><path d="M926.0 630 L940.0 650 L956.0 690 L970.0 740"/><path d="M935.5 630 L949.5 650 L965.5 690 L979.5 740"/></g><path d="M836.3 699 L850 695.2 L861.5 690 L870 681.6 L913.2 640.4 L930 640.2" stroke="#1416e6" stroke-width="2.3" fill="none" stroke-linejoin="round"/><path d="M921.6 634 L930 636.2" stroke="#1416e6" stroke-width="2" fill="none"/></svg>
<div style="left:726.0px;top:729.6px;width:120.0px;height:18.0px;font-size:13.5px;color:#e6e6e6;line-height:18px;">anifold Pressure</div>
<div style="left:745.5px;top:727.4px;width:60.0px;height:18.0px;font-size:13.5px;color:#e6e6e6;line-height:18px;">43.5 psi</div>
<div style="left:808.0px;top:733.2px;width:70.0px;height:18.0px;font-size:13.4px;color:#ececec;line-height:18px;">-13.1 psi</div>
<div style="left:880.0px;top:733.2px;width:60.0px;height:18.0px;font-size:13.5px;color:#ececec;line-height:18px;">0 RPM</div>
<svg style="left:0;top:0" width="930" height="100" viewBox="0 0 930 100" fill="none" stroke="#b3afa7" stroke-width="2.6" stroke-linejoin="miter"><rect x="1.4" y="45.2" width="23" height="31" stroke-width="2.5"/><rect x="13.4" y="55" width="24.8" height="31.2" fill="#2c2c28" stroke-width="2.5"/><rect x="69.4" y="44" width="38" height="45.6"/><path d="M77 44.6 V75.4 H92 L100.4 68 V44.6" /><path d="M92 75.4 V68.4 H100.4" stroke-width="1.8"/><rect x="81.6" y="40.6" width="13.8" height="6.4" fill="#2c2c28" stroke-width="2"/><path d="M152 82 H134 V41 H175 V60 M134 46.2 H175"/><path d="M161.2 70.4 A11.6 11.6 0 1 1 162.2 86.4" /><path d="M160.4 62.2 V71 H169.2" stroke-width="2.6"/><path d="M234 82 H252.4 V41 H212.6 V60 M212.6 46.2 H252.4"/><path d="M225.2 70.4 A11.6 11.6 0 1 0 224.2 86.4" /><path d="M226 62.2 V71 H217.2" stroke-width="2.6"/><path d="M273.9 42.2 H316.9 M273.9 48.8 H316.9 M273.9 55.4 H316.9 M273.9 62.1 H316.9 M273.9 68.7 H306.1 M273.9 75.3 H306.1 M273.9 81.9 H295.4 M273.9 88.5 H295.4 M273.9 40.9 V89.8 M284.6 40.9 V89.8 M295.4 40.9 V89.8 M306.1 40.9 V76.6 M316.9 40.9 V63.4 " stroke-width="2.7"/><path d="M302.2 89.8 L304.6 82 L317.4 70.2 L322 75 L309.4 87.2 Z" fill="#2c2c28" stroke-width="2.5" stroke-linejoin="round"/><rect x="343.2" y="41.8" width="48" height="48" rx="5" stroke-width="2.8"/><rect x="352.2" y="52.2" width="30.6" height="10.6" stroke-width="2.7"/><path d="M354.4 63.6 V72 M361.6 63.6 V70.4 M369.5 63.6 V77 M378.4 63.6 V71 H387.4" stroke-width="2.5"/><rect x="349.2" y="73.2" width="7" height="5" stroke-width="2.3"/><circle cx="369.5" cy="81.3" r="4" stroke-width="2.5"/><path d="M347.4 46.2 h2.4 M379.6 46.2 h2.4 M384.8 46.2 h2.4" stroke-width="2.4"/><path d="M415.8 40.6 V89.6 H460.4" stroke-width="2.7"/><path d="M417 55 H460.4 M417 76.8 H460.4" stroke-width="2.2"/><path d="M413.2 45 V83" stroke-width="3" stroke-dasharray="2.4 3.6"/><path d="M421.4 63.2 C428.6 62.6 429.6 45.2 436.8 45.2 C444 45.2 445 62.6 452.2 63.2" stroke-width="2.5"/><path d="M421.4 83.4 C425.4 83.4 425.4 68.6 429.5 68.6 C433.6 68.6 433.6 84.2 437.6 84.2 C441.6 84.2 441.6 68.6 445.7 68.6 C449.8 68.6 449.8 83.4 452.4 83.4" stroke-width="2.5"/><g stroke="#a9a6a0" stroke-width="2.5"><path d="M483 58 V54.4 a2 2 0 0 1 2 -2 H529.6 a2 2 0 0 1 2 2 V67.4 a2 2 0 0 1 -2 2 H504.4" /><rect x="483" y="63.4" width="15.6" height="17" rx="2.4"/><path d="M486.8 63.2 V61.4 a3.6 3.2 0 0 1 7.6 0 V63.2" stroke-width="3"/><path d="M490.8 68.8 V74.4" stroke-width="2.3"/><path d="M500.4 61 h24" stroke-width="3" stroke-dasharray="2.8 2.7"/></g><path d="M571.2 38.4 H598.4 V56.8 H605.4 L583.8 78 L562.6 56.8 H571.2 Z" stroke-width="2.7"/><path d="M570 54.6 H553.6 V90.8 H588.2 V79.4 H577.4 M553.6 84.6 H588.2 M557.6 54.4 V50.6 H565.2 V54.4 M555.8 71 H565.4 M555.8 76.6 H565.4 M555.8 81.6 H573 M551 58.6 V63 M551 82.4 V87 M590.8 82.4 V87 M566 60.6 L575.6 70.4" stroke-width="2.3"/><path d="M641.2 38.4 H667.8 V56.8 H674.4 L653.2 78 L632.2 56.8 H641.2 Z" stroke-width="2.7"/><path d="M636 54.2 H623.6 V83.6 M662 75.4 V83.6 M631.4 59.2 H628.6 V78.4 H651 M657.4 78.4 H658 M620.4 83.6 H637 V87 H648 V83.6 H664.6 V90.8 H620.4 Z" stroke-width="2.3"/><g stroke="#878782" stroke-width="2.3" fill="none"><circle cx="696.8" cy="46.3" r="11.9" fill="#878782" stroke="none"/><path d="M695.09 39.92 A6.6 6.6 0 0 1 700.95 41.17" stroke="#2c2c28" stroke-width="4.6" fill="none"/><path d="M703.18 48.01 A6.6 6.6 0 0 1 699.17 52.46" stroke="#2c2c28" stroke-width="4.6" fill="none"/><path d="M692.13 50.97 A6.6 6.6 0 0 1 690.28 45.27" stroke="#2c2c28" stroke-width="4.6" fill="none"/><circle cx="737" cy="46.3" r="11.9" fill="#878782" stroke="none"/><path d="M735.29 39.92 A6.6 6.6 0 0 1 741.15 41.17" stroke="#2c2c28" stroke-width="4.6" fill="none"/><path d="M743.38 48.01 A6.6 6.6 0 0 1 739.37 52.46" stroke="#2c2c28" stroke-width="4.6" fill="none"/><path d="M732.33 50.97 A6.6 6.6 0 0 1 730.48 45.27" stroke="#2c2c28" stroke-width="4.6" fill="none"/><path d="M687.2 48 V79.6 a11 11 0 0 0 11 11 H736 a11 11 0 0 0 11 -11 V48" stroke="#878782"/></g><circle cx="835" cy="65" r="19.6" stroke-width="2.4"/><text x="835.2" y="77" text-anchor="middle" font-family='"Liberation Sans", sans-serif' font-size="31" fill="#b3afa7" stroke="#b3afa7" stroke-width=".9">?</text><path d="M894.4 41.8 H915 L929.6 56.4 V73.6 L915 89 H894.4 L880.6 74 V56 Z" stroke-width="2.4"/><path d="M904.8 50.6 V72" stroke-width="2.4"/><circle cx="904.8" cy="77.6" r="1.5" fill="#b3afa7" stroke="none"/></svg>
</div></body></html>
